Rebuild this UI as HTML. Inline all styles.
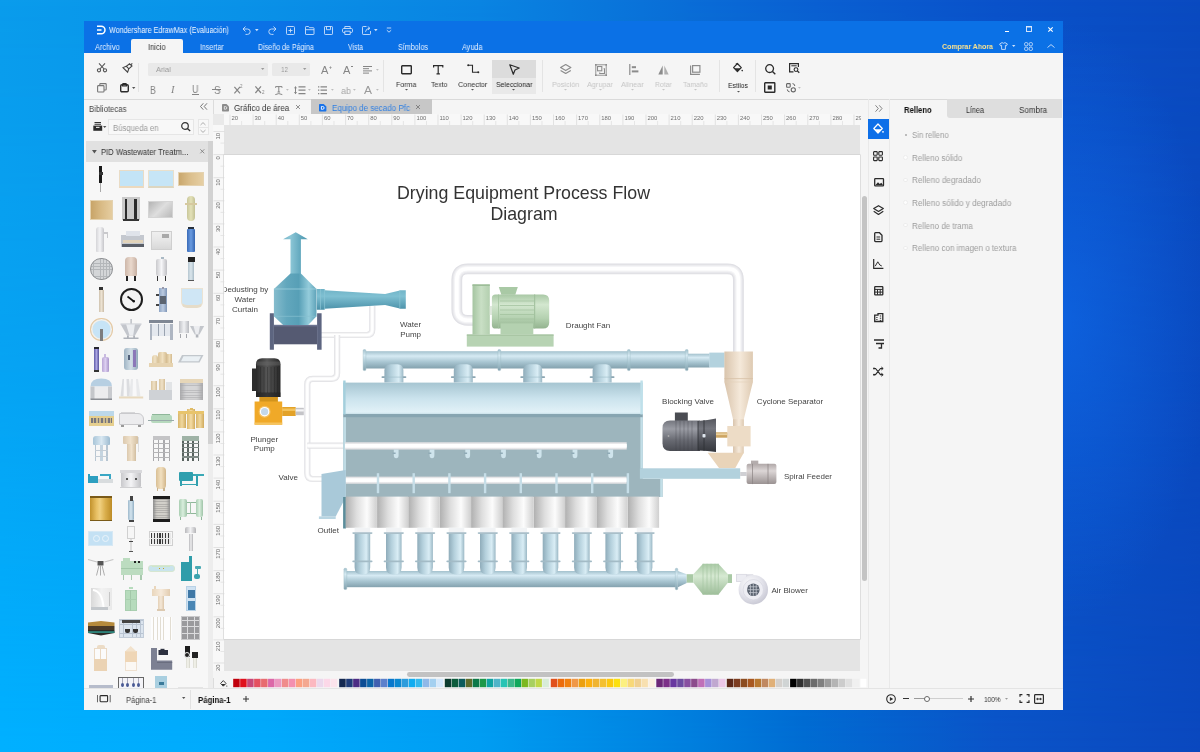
<!DOCTYPE html>
<html><head><meta charset="utf-8"><title>EdrawMax</title>
<style>
*{box-sizing:border-box;margin:0;padding:0}
html,body{width:1200px;height:752px;overflow:hidden}
body{font-family:"Liberation Sans",sans-serif;position:relative;
 background:linear-gradient(to right,#0a9cec 0,#0a92e8 20%,#0a84e2 40%,#0a70d8 55%,#0a60d2 68%,#0a52ca 83%,#0a4ac0 100%);}
#bg2{position:absolute;left:0;top:0;width:1200px;height:752px;
 background:linear-gradient(to right,#00b0ff 0,#00aafc 22%,#009df2 40%,#0086e2 54%,#006cd2 67%,#0a54c8 83%,#0a48be 100%);
 -webkit-mask-image:linear-gradient(to bottom,rgba(0,0,0,0) 0,rgba(0,0,0,.35) 45%,#000 100%);mask-image:linear-gradient(to bottom,rgba(0,0,0,0) 0,rgba(0,0,0,.35) 45%,#000 100%);}
#bg3{position:absolute;left:0;top:0;width:1200px;height:752px;
 background:radial-gradient(ellipse 150px 300px at 1063px 320px,rgba(16,108,236,.6),rgba(16,108,236,0) 100%);}
.a{position:absolute}
.t{position:absolute;white-space:nowrap;line-height:1;will-change:transform}
svg{position:absolute;overflow:visible}
</style></head><body>
<div id="bg2"></div><div id="bg3"></div>
<div class="a" style="left:84px;top:21px;width:979px;height:689px;background:#f5f5f5"></div>
<div class="a" style="left:84px;top:21px;width:979px;height:32px;background:#0b71e6"></div>
<!-- p_title -->
<svg style="left:95.5px;top:24.5px;" width="10" height="10" viewBox="0 0 10 10"><path d="M1 1.200H5.200A3.800 3.800 0 0 1 5.200 8.800H1" fill="none" stroke="#fff" stroke-width="1.500"/><path d="M1 5H5.500" stroke="#fff" stroke-width="1.500"/></svg>
<div class="t" style="left:109.00px;top:26.88px;font-size:8.2px;color:#f4f8ff;transform:scaleX(0.870);transform-origin:0 0;">Wondershare EdrawMax (Evaluación)</div>
<svg style="left:242px;top:25px;" width="10" height="10" viewBox="0 0 10 10"><path d="M3.5 1.5L1 4l2.5 2.5M1 4h4.5a2.7 2.7 0 0 1 0 5.4H3.5" fill="none" stroke="#cde1fb" stroke-width=".9"/></svg>
<svg style="left:254.5px;top:28.5px;" width="4" height="3" viewBox="0 0 4 3"><path d="M0 0h3.6L1.8 2.2z" fill="#cde1fb"/></svg>
<svg style="left:267px;top:25px;" width="10" height="10" viewBox="0 0 10 10"><path d="M6.5 1.5L9 4 6.5 6.5M9 4H4.5a2.7 2.7 0 0 0 0 5.4H6.5" fill="none" stroke="#cde1fb" stroke-width=".9"/></svg>
<svg style="left:286px;top:25.5px;" width="9" height="9" viewBox="0 0 9 9"><rect x=".5" y=".5" width="8" height="8" rx="1" fill="none" stroke="#cde1fb" stroke-width=".9"/><path d="M4.5 2.5v4M2.5 4.5h4" fill="none" stroke="#cde1fb" stroke-width=".9"/></svg>
<svg style="left:304.5px;top:25.5px;" width="10" height="9" viewBox="0 0 10 9"><path d="M.5 8V1.2q0-.7.7-.7h2.3l1 1.2h3.8q.7 0 .7.7V8q0 .5-.6.5H1.1Q.5 8.500 .5 8zM.5 3.7h8.500" fill="none" stroke="#cde1fb" stroke-width=".9"/></svg>
<svg style="left:324px;top:25.5px;" width="9" height="9" viewBox="0 0 9 9"><path d="M.5 1.2q0-.7.7-.7h6.600q.7 0 .7.7v6.600q0 .7-.7.7H1.200q-.7 0-.7-.7zM2.500 .5v3.200h4v-3.200" fill="none" stroke="#cde1fb" stroke-width=".9"/></svg>
<svg style="left:342px;top:25.5px;" width="11" height="9" viewBox="0 0 11 9"><path d="M2.800 2.500V.5h5.400v2M2.800 6.500H1.700Q.5 6.500 .5 5.300v-1.600Q.5 2.500 1.700 2.500h7.600q1.200 0 1.200 1.200v1.600q0 1.200-1.200 1.200H8.200M2.800 5.200h5.400v3.300H2.800z" fill="none" stroke="#cde1fb" stroke-width=".9"/></svg>
<svg style="left:362px;top:25.5px;" width="9" height="9" viewBox="0 0 9 9"><path d="M4.500 .5H1.200q-.7 0-.7.7v6.600q0 .7.7.7h6.600q.7 0 .7-.7V5M3.500 5.800q.3-3 4-3.600M5.800 .6l2 1.500-1.600 1.900" fill="none" stroke="#cde1fb" stroke-width=".9"/></svg>
<svg style="left:373.5px;top:28.5px;" width="4" height="3" viewBox="0 0 4 3"><path d="M0 0h3.600L1.800 2.200z" fill="#cde1fb"/></svg>
<svg style="left:386px;top:27px;" width="6" height="8" viewBox="0 0 6 8"><path d="M.8 1h4.400M.8 3.200L3 5.200 5.200 3.200" fill="none" stroke="#cde1fb" stroke-width=".9"/></svg>
<div class="a" style="left:131px;top:39px;width:51.5px;height:14px;background:#f5f5f5;border-radius:2px 2px 0 0"></div>
<div class="t" style="left:95.00px;top:43.88px;font-size:8.2px;color:#e6f0ff;transform:scaleX(0.903);transform-origin:0 0;">Archivo</div>
<div class="t" style="left:148.00px;top:43.88px;font-size:8.2px;color:#333;transform:scaleX(0.919);transform-origin:0 0;">Inicio</div>
<div class="t" style="left:200.00px;top:43.88px;font-size:8.2px;color:#e6f0ff;transform:scaleX(0.853);transform-origin:0 0;">Insertar</div>
<div class="t" style="left:258.00px;top:43.88px;font-size:8.2px;color:#e6f0ff;transform:scaleX(0.865);transform-origin:0 0;">Diseño de Página</div>
<div class="t" style="left:348.00px;top:43.88px;font-size:8.2px;color:#e6f0ff;transform:scaleX(0.830);transform-origin:0 0;">Vista</div>
<div class="t" style="left:397.50px;top:43.88px;font-size:8.2px;color:#e6f0ff;transform:scaleX(0.878);transform-origin:0 0;">Símbolos</div>
<div class="t" style="left:462.00px;top:43.88px;font-size:8.2px;color:#e6f0ff;transform:scaleX(0.887);transform-origin:0 0;">Ayuda</div>
<div class="t" style="left:941.50px;top:42.68px;font-size:7.8px;color:#fbe390;font-weight:bold;transform:scaleX(0.896);transform-origin:0 0;">Comprar Ahora</div>
<svg style="left:999px;top:42px;" width="9" height="8" viewBox="0 0 9 8"><path d="M3 .6L.6 2l1 1.800 1-.5V7.400h3.800V3.300l1 .5 1-1.800L6 .6Q4.500 2 3 .6z" fill="none" stroke="#cde1fb" stroke-width=".9"/></svg>
<svg style="left:1011.5px;top:45px;" width="4" height="3" viewBox="0 0 4 3"><path d="M0 0h3.400L1.700 2z" fill="#cde1fb"/></svg>
<svg style="left:1023.5px;top:41.5px;" width="9" height="9" viewBox="0 0 9 9"><rect x=".6" y=".6" width="3.200" height="3.200" rx="1.100" fill="none" stroke="#cde1fb" stroke-width=".9"/><rect x="5.200" y=".6" width="3.200" height="3.200" rx="1.100" fill="none" stroke="#cde1fb" stroke-width=".9"/><rect x=".6" y="5.200" width="3.200" height="3.200" rx="1.100" fill="none" stroke="#cde1fb" stroke-width=".9"/><rect x="5.200" y="5.200" width="3.200" height="3.200" rx="1.100" fill="none" stroke="#cde1fb" stroke-width=".9"/></svg>
<svg style="left:1046.5px;top:43.5px;" width="8" height="4" viewBox="0 0 8 4"><path d="M.5 3.500L4 .6 7.500 3.500" fill="none" stroke="#cde1fb" stroke-width=".9"/></svg>
<div class="a" style="left:1005px;top:31px;width:4px;height:1.2px;background:#fff;"></div>
<svg style="left:1026px;top:26px;" width="6" height="6" viewBox="0 0 6 6"><rect x=".5" y=".5" width="5" height="5" fill="none" stroke="#e6effd" stroke-width=".9"/><path d="M.5 1h5" stroke="#e6effd" stroke-width=".9"/></svg>
<svg style="left:1048px;top:26.5px;" width="5" height="5" viewBox="0 0 5 5"><path d="M.3 .3l4.400 4.400M4.700 .3L.3 4.700" stroke="#fff" stroke-width="1.100"/></svg>
<!-- p_ribbon -->
<div class="a" style="left:84px;top:98.5px;width:979px;height:1px;background:#dadada;"></div>
<svg style="left:97px;top:63px;" width="10" height="9.5" viewBox="0 0 10 9.5"><circle cx="2" cy="7.300" r="1.600" fill="none" stroke="#555" stroke-width="1.1"/><circle cx="8" cy="7.300" r="1.600" fill="none" stroke="#555" stroke-width="1.1"/><path d="M2.900 6L8 .4M7.100 6L2 .4" fill="none" stroke="#555" stroke-width="1.1"/></svg>
<svg style="left:121.5px;top:62.5px;" width="11" height="10" viewBox="0 0 11 10"><path d="M7.600 .8L10 3 6.800 5.800 4.300 3.200zM4.300 3.200L1 4.600 5.600 9.200 6.800 5.800M8.800 1.900l1.500-1.500" fill="none" stroke="#444" stroke-width="1.1"/></svg>
<svg style="left:97px;top:83.3px;" width="10" height="9.5" viewBox="0 0 10 9.5"><rect x=".6" y="2.600" width="6.400" height="6.400" rx=".8" fill="none" stroke="#777" stroke-width="1.1"/><path d="M2.800 2.600V1.300q0-.7.7-.7h5q.7 0 .7.7v5q0 .7-.7.7H7" fill="none" stroke="#777" stroke-width="1.1"/></svg>
<svg style="left:119.5px;top:83.3px;" width="9.5" height="9.5" viewBox="0 0 9.5 9.5"><rect x=".7" y="1.800" width="7.600" height="7" rx="1.200" fill="none" stroke="#2b2b2b" stroke-width="1.4"/><path d="M2.600 3V1.400Q2.600 .6 3.400 .6h2.200q.8 0 .8 .8V3z" fill="none" stroke="#2b2b2b" stroke-width="1.2"/></svg>
<svg style="left:131.60000000000002px;top:86.9px;" width="3.4" height="2" viewBox="0 0 3.4 2"><path d="M0 0h3.4L1.7 2z" fill="#555"/></svg>
<div class="a" style="left:137.5px;top:62.5px;width:1px;height:29px;background:#e4e4e4;"></div>
<div class="a" style="left:148px;top:62.7px;width:119.5px;height:13.5px;background:#e9e9e9;border-radius:1.500px"></div>
<div class="t" style="left:156.00px;top:66.08px;font-size:8px;color:#9a9a9a;transform:scaleX(0.918);transform-origin:0 0;">Arial</div>
<svg style="left:260.8px;top:68.4px;" width="3.4" height="2" viewBox="0 0 3.4 2"><path d="M0 0h3.4L1.7 2z" fill="#9a9a9a"/></svg>
<div class="a" style="left:272px;top:62.7px;width:37.5px;height:13.5px;background:#e9e9e9;border-radius:1.500px"></div>
<div class="t" style="left:280.50px;top:66.08px;font-size:8px;color:#9a9a9a;transform:scaleX(0.787);transform-origin:0 0;">12</div>
<svg style="left:303.0px;top:68.4px;" width="3.4" height="2" viewBox="0 0 3.4 2"><path d="M0 0h3.4L1.7 2z" fill="#9a9a9a"/></svg>
<div class="t" style="left:321.00px;top:65.45px;font-size:10.5px;color:#858585;transform:scaleX(1.057);transform-origin:0 0;">A</div>
<div class="t" style="left:328.60px;top:64.95px;font-size:5px;color:#858585;font-weight:bold;">+</div>
<div class="t" style="left:343.00px;top:65.45px;font-size:10.5px;color:#858585;transform:scaleX(1.057);transform-origin:0 0;">A</div>
<div class="a" style="left:350.6px;top:66.3px;width:2.6px;height:0.9px;background:#858585;"></div>
<svg style="left:363px;top:66px;" width="9.5" height="7.5" viewBox="0 0 9.5 7.5"><path d="M0 .5h9M0 2.700h6M0 4.900h9M0 7.100h6" fill="none" stroke="#858585" stroke-width="1"/></svg>
<svg style="left:375.6px;top:68.75px;" width="2.8" height="1.7" viewBox="0 0 2.8 1.7"><path d="M0 0h2.8L1.4 1.7z" fill="#bdbdbd"/></svg>
<div class="t" style="left:150.00px;top:85.05px;font-size:10.5px;color:#858585;transform:scaleX(0.857);transform-origin:0 0;">B</div>
<div class="t" style="left:171.00px;top:85.05px;font-size:10.5px;color:#858585;font-style:italic;font-family:'Liberation Serif',serif;">I</div>
<div class="t" style="left:192.30px;top:85.10px;font-size:10px;color:#858585;transform:scaleX(0.900);transform-origin:0 0;">U</div>
<div class="a" style="left:192px;top:94px;width:7.2px;height:0.9px;background:#858585;"></div>
<div class="t" style="left:213.50px;top:85.05px;font-size:10.5px;color:#858585;transform:scaleX(0.928);transform-origin:0 0;">S</div>
<div class="a" style="left:212.3px;top:89.3px;width:9px;height:0.9px;background:#858585;"></div>
<svg style="left:233.5px;top:86px;" width="11" height="8" viewBox="0 0 11 8"><path d="M.4 .8L6 7.400M6 .8L.4 7.400" fill="none" stroke="#858585" stroke-width="1.2"/></svg>
<div class="t" style="left:240.30px;top:84.89px;font-size:4.5px;color:#858585;">2</div>
<svg style="left:254.7px;top:86px;" width="11" height="8" viewBox="0 0 11 8"><path d="M.4 .4L6 7M6 .4L.4 7" fill="none" stroke="#858585" stroke-width="1.2"/></svg>
<div class="t" style="left:261.50px;top:90.69px;font-size:4.5px;color:#858585;">2</div>
<svg style="left:274.5px;top:85.5px;" width="8" height="9" viewBox="0 0 8 9"><path d="M.6 1.800V.6h6.400v1.200M3.800 .6v5.400M2.500 6h2.600" fill="none" stroke="#858585" stroke-width="1"/><path d="M.3 8.600Q3.800 6.600 7.300 8.600" fill="none" stroke="#858585" stroke-width="1"/></svg>
<svg style="left:285.6px;top:88.95px;" width="2.8" height="1.7" viewBox="0 0 2.8 1.7"><path d="M0 0h2.8L1.4 1.7z" fill="#bdbdbd"/></svg>
<svg style="left:294px;top:85.8px;" width="11.5" height="8.5" viewBox="0 0 11.5 8.5"><path d="M4.500 .8h7M4.500 4.200h7M4.500 7.600h7" fill="none" stroke="#858585" stroke-width="1.2"/><path d="M1.500 .7v7" fill="none" stroke="#858585" stroke-width="1"/><path d="M0 2.300L1.500 .2 3 2.300zM0 6.100L1.500 8.200 3 6.100z" fill="#858585"/></svg>
<svg style="left:307.90000000000003px;top:88.95px;" width="2.8" height="1.7" viewBox="0 0 2.8 1.7"><path d="M0 0h2.8L1.4 1.7z" fill="#bdbdbd"/></svg>
<svg style="left:318.3px;top:85.8px;" width="9.5" height="8.5" viewBox="0 0 9.5 8.5"><path d="M2.500 .8h6.500M2.500 4.200h6.500M2.500 7.600h6.500" fill="none" stroke="#858585" stroke-width="1.2"/><path d="M0 .8h1.300M0 4.200h1.300M0 7.600h1.300" fill="none" stroke="#858585" stroke-width="1.2"/></svg>
<svg style="left:330.6px;top:88.95px;" width="2.8" height="1.7" viewBox="0 0 2.8 1.7"><path d="M0 0h2.8L1.4 1.7z" fill="#bdbdbd"/></svg>
<div class="t" style="left:340.50px;top:86.34px;font-size:9.5px;color:#a8a8a8;transform:scaleX(0.946);transform-origin:0 0;">ab</div>
<svg style="left:353.1px;top:88.95px;" width="2.8" height="1.7" viewBox="0 0 2.8 1.7"><path d="M0 0h2.8L1.4 1.7z" fill="#bdbdbd"/></svg>
<div class="t" style="left:364.00px;top:84.61px;font-size:11px;color:#9a9a9a;transform:scaleX(1.090);transform-origin:0 0;">A</div>
<svg style="left:375.90000000000003px;top:88.95px;" width="2.8" height="1.7" viewBox="0 0 2.8 1.7"><path d="M0 0h2.8L1.4 1.7z" fill="#bdbdbd"/></svg>
<div class="a" style="left:383px;top:60px;width:1px;height:32px;background:#e4e4e4;"></div>
<svg style="left:400.7px;top:64.7px;" width="11" height="9.5" viewBox="0 0 11 9.5"><rect x=".7" y=".7" width="9.600" height="8" rx=".6" fill="none" stroke="#2b2b2b" stroke-width="1.4"/></svg>
<div class="t" style="left:396.05px;top:80.98px;font-size:8px;color:#333;transform:scaleX(0.878);transform-origin:0 0;">Forma</div>
<svg style="left:404.7px;top:88.5px;" width="3" height="1.6" viewBox="0 0 3 1.6"><path d="M0 0h3L1.5 1.6z" fill="#555"/></svg>
<svg style="left:433.3px;top:65px;" width="10.5" height="9.5" viewBox="0 0 10.5 9.5"><path d="M.6 2.400V.6h9.200v1.800M5.200 .6v8.200M3.500 8.800h3.400" fill="none" stroke="#2b2b2b" stroke-width="1.2"/></svg>
<div class="t" style="left:430.65px;top:80.98px;font-size:8px;color:#333;transform:scaleX(0.852);transform-origin:0 0;">Texto</div>
<svg style="left:466.5px;top:64px;" width="13" height="10" viewBox="0 0 13 10"><path d="M1.200 1.200H5.500V8.200H11" fill="none" stroke="#2b2b2b" stroke-width="1.1"/><circle cx="1.200" cy="1.200" r="1" fill="#2b2b2b"/><circle cx="11.300" cy="8.200" r="1" fill="#2b2b2b"/></svg>
<div class="t" style="left:458.05px;top:80.98px;font-size:8px;color:#333;transform:scaleX(0.903);transform-origin:0 0;">Conector</div>
<svg style="left:471.2px;top:88.5px;" width="3" height="1.6" viewBox="0 0 3 1.6"><path d="M0 0h3L1.5 1.6z" fill="#555"/></svg>
<div class="a" style="left:491.7px;top:60.3px;width:44.5px;height:33.4px;background:#e9e9e9;"></div>
<div class="a" style="left:491.7px;top:60.3px;width:44.5px;height:17.4px;background:#dcdcdc;"></div>
<svg style="left:508.7px;top:64.3px;" width="11" height="11" viewBox="0 0 11 11"><path d="M.8 .8L10.200 4 6 6 4.300 10.300z" fill="none" stroke="#2b2b2b" stroke-width="1.2" stroke-linejoin="round"/></svg>
<div class="t" style="left:495.75px;top:80.98px;font-size:8px;color:#222;transform:scaleX(0.868);transform-origin:0 0;">Seleccionar</div>
<svg style="left:512.4px;top:88.5px;" width="3" height="1.6" viewBox="0 0 3 1.6"><path d="M0 0h3L1.5 1.6z" fill="#555"/></svg>
<div class="a" style="left:542px;top:60px;width:1px;height:32px;background:#e4e4e4;"></div>
<svg style="left:560px;top:64.3px;" width="11.5" height="11" viewBox="0 0 11.5 11"><path d="M5.700 .6L10.800 3.600 5.700 6.600 .6 3.600z" fill="none" stroke="#8c8c8c" stroke-width="1.2" stroke-linejoin="round"/><path d="M.6 6.400L5.700 9.500 10.800 6.400" fill="none" stroke="#8c8c8c" stroke-width="1.2" stroke-linejoin="round"/></svg>
<div class="t" style="left:552.05px;top:80.98px;font-size:8px;color:#c6c6c6;transform:scaleX(0.903);transform-origin:0 0;">Posición</div>
<svg style="left:564.2px;top:88.5px;" width="3" height="1.6" viewBox="0 0 3 1.6"><path d="M0 0h3L1.5 1.6z" fill="#c6c6c6"/></svg>
<svg style="left:594.7px;top:64px;" width="12" height="12" viewBox="0 0 12 12"><rect x=".8" y=".8" width="10.400" height="10.400" fill="none" stroke="#8c8c8c" stroke-width="0.9"/><rect x="2.500" y="2.500" width="4.300" height="4.300" fill="none" stroke="#8c8c8c" stroke-width="1.1"/><path d="M8.600 4.700h.9v4.800H4.700v-.9" fill="none" stroke="#8c8c8c" stroke-width="1.1"/><rect x="0" y="0" width="1.600" height="1.600" fill="#8c8c8c"/><rect x="10.400" y="0" width="1.600" height="1.600" fill="#8c8c8c"/><rect x="0" y="10.400" width="1.600" height="1.600" fill="#8c8c8c"/><rect x="10.400" y="10.400" width="1.600" height="1.600" fill="#8c8c8c"/></svg>
<div class="t" style="left:587.30px;top:80.98px;font-size:8px;color:#c6c6c6;transform:scaleX(0.913);transform-origin:0 0;">Agrupar</div>
<svg style="left:598.8px;top:88.5px;" width="3" height="1.6" viewBox="0 0 3 1.6"><path d="M0 0h3L1.5 1.6z" fill="#c6c6c6"/></svg>
<svg style="left:628.5px;top:64.3px;" width="10" height="11" viewBox="0 0 10 11"><path d="M.8 0v11" fill="none" stroke="#8c8c8c" stroke-width="1.2"/><rect x="2.800" y="2.200" width="4.200" height="2" fill="#8c8c8c"/><rect x="2.800" y="6.400" width="6.600" height="2" fill="#8c8c8c"/></svg>
<div class="t" style="left:621.35px;top:80.98px;font-size:8px;color:#c6c6c6;transform:scaleX(0.912);transform-origin:0 0;">Alinear</div>
<svg style="left:631.2px;top:88.5px;" width="3" height="1.6" viewBox="0 0 3 1.6"><path d="M0 0h3L1.5 1.6z" fill="#c6c6c6"/></svg>
<svg style="left:658.4px;top:65px;" width="11" height="10" viewBox="0 0 11 10"><path d="M4.700 .5V9.500H.3z" fill="#8c8c8c"/><path d="M6.300 .5V9.500H10.700z" fill="#b0b0b0"/></svg>
<div class="t" style="left:655.35px;top:80.98px;font-size:8px;color:#c6c6c6;transform:scaleX(0.854);transform-origin:0 0;">Rotar</div>
<svg style="left:662.2px;top:88.5px;" width="3" height="1.6" viewBox="0 0 3 1.6"><path d="M0 0h3L1.5 1.6z" fill="#c6c6c6"/></svg>
<svg style="left:690.4px;top:64.7px;" width="10.5" height="10" viewBox="0 0 10.5 10"><rect x="2.600" y=".6" width="7.300" height="6.600" fill="none" stroke="#8c8c8c" stroke-width="1.2"/><path d="M.6 .6V9.400H9.900" fill="none" stroke="#8c8c8c" stroke-width="1.2"/></svg>
<div class="t" style="left:683.25px;top:80.98px;font-size:8px;color:#c6c6c6;transform:scaleX(0.868);transform-origin:0 0;">Tamaño</div>
<svg style="left:694.1px;top:88.5px;" width="3" height="1.6" viewBox="0 0 3 1.6"><path d="M0 0h3L1.5 1.6z" fill="#c6c6c6"/></svg>
<div class="a" style="left:718.5px;top:60px;width:1px;height:32px;background:#e4e4e4;"></div>
<svg style="left:733.3px;top:62.6px;" width="10" height="9.5" viewBox="0 0 10 9.5"><path d="M4.400 .5L8.300 4.600 4.400 8.600 .6 4.600z" fill="none" stroke="#2b2b2b" stroke-width="1.2" stroke-linejoin="round"/><path d="M1.200 5.200h6.600L4.400 8.500z" fill="#2b2b2b"/><path d="M3 .2l1.600 1.600" fill="none" stroke="#2b2b2b" stroke-width="1"/><circle cx="9.200" cy="7.600" r=".8" fill="#2b2b2b"/></svg>
<div class="t" style="left:728.00px;top:82.08px;font-size:8px;color:#222;transform:scaleX(0.849);transform-origin:0 0;">Estilos</div>
<svg style="left:736.8px;top:90.9px;" width="3" height="1.6" viewBox="0 0 3 1.6"><path d="M0 0h3L1.5 1.6z" fill="#555"/></svg>
<div class="a" style="left:755px;top:60px;width:1px;height:32px;background:#e4e4e4;"></div>
<svg style="left:765px;top:63.5px;" width="11" height="10.5" viewBox="0 0 11 10.5"><circle cx="4.600" cy="4.600" r="3.900" fill="none" stroke="#2b2b2b" stroke-width="1.3"/><path d="M7.500 7.500L10.300 10.200" fill="none" stroke="#2b2b2b" stroke-width="1.4"/></svg>
<svg style="left:788.7px;top:63px;" width="11" height="10" viewBox="0 0 11 10"><path d="M9.400 4V.6H.6V8.800H4.500" fill="none" stroke="#2b2b2b" stroke-width="1.2"/><path d="M2.300 2.800h5.400" fill="none" stroke="#2b2b2b" stroke-width="1"/><circle cx="7" cy="6.600" r="1.900" fill="none" stroke="#2b2b2b" stroke-width="1.1"/><path d="M8.400 8l1.900 1.700" fill="none" stroke="#2b2b2b" stroke-width="1.2"/></svg>
<svg style="left:764.3px;top:82px;" width="11.5" height="11" viewBox="0 0 11.5 11"><rect x=".7" y=".7" width="10.100" height="9.600" rx=".6" fill="none" stroke="#2b2b2b" stroke-width="1.4"/><rect x="3.700" y="3.500" width="4.100" height="4" fill="#2b2b2b"/></svg>
<svg style="left:786px;top:83px;" width="10.5" height="9.5" viewBox="0 0 10.5 9.5"><rect x=".6" y=".6" width="3.600" height="3.600" rx=".6" fill="none" stroke="#666" stroke-width="1.1"/><circle cx="7.300" cy="6.800" r="2.100" fill="none" stroke="#666" stroke-width="1.1"/><path d="M6.500 .6Q8.800 .8 8.800 3M3.600 8.800Q1.300 8.600 1.300 6.400" fill="none" stroke="#666" stroke-width="1"/></svg>
<svg style="left:798.2px;top:86.75px;" width="2.8" height="1.7" viewBox="0 0 2.8 1.7"><path d="M0 0h2.8L1.4 1.7z" fill="#bdbdbd"/></svg>
<!-- p_left -->
<div class="a" style="left:212.8px;top:99px;width:1px;height:589px;background:#dcdcdc;"></div>
<div class="t" style="left:88.70px;top:104.63px;font-size:8.3px;color:#444;transform:scaleX(0.934);transform-origin:0 0;">Bibliotecas</div>
<svg style="left:199.5px;top:103.4px;" width="7.5" height="7" viewBox="0 0 7.5 7"><path d="M3.300 .3L.5 3.500 3.300 6.700M7 .3L4.200 3.500 7 6.700" fill="none" stroke="#666" stroke-width=".9"/></svg>
<svg style="left:93px;top:122px;" width="9.5" height="9" viewBox="0 0 9.5 9"><path d="M1.500 0h6.500v1H1.500zM1.500 1.800h6.500v1H1.500z" fill="#333"/><path d="M.3 3.600h8.900V8.800H.3z" fill="#2b2b2b"/><path d="M3 4.800h3.500v1.100H3z" fill="#f5f5f5"/></svg>
<svg style="left:102.8px;top:126px;" width="3.4" height="2" viewBox="0 0 3.4 2"><path d="M0 0h3.400L1.700 2z" fill="#555"/></svg>
<div class="a" style="left:108.3px;top:118.6px;width:85.4px;height:16.4px;background:#f8f8f8;border:1px solid #e6e6e6"></div>
<div class="t" style="left:113.20px;top:123.73px;font-size:8.3px;color:#9a9a9a;transform:scaleX(0.930);transform-origin:0 0;">Búsqueda en</div>
<svg style="left:181px;top:122px;" width="10" height="9.5" viewBox="0 0 10 9.5"><circle cx="4" cy="4" r="3.300" fill="none" stroke="#333" stroke-width="1.200"/><path d="M6.400 6.400L9.200 9" stroke="#333" stroke-width="1.300"/></svg>
<div class="a" style="left:198.1px;top:118.6px;width:10.5px;height:16.4px;background:#f8f8f8;border:1px solid #e6e6e6"></div>
<svg style="left:200.3px;top:121.5px;" width="6" height="11" viewBox="0 0 6 11"><path d="M.5 3L3 .6 5.500 3M.5 8L3 10.400 5.500 8" fill="none" stroke="#999" stroke-width=".8"/></svg>
<div class="a" style="left:198.1px;top:126.5px;width:10.5px;height:1px;background:#e6e6e6;"></div>
<div class="a" style="left:86.3px;top:140.8px;width:121.6px;height:21px;background:#e1e1e1;"></div>
<svg style="left:92.4px;top:149.5px;" width="5" height="3.6" viewBox="0 0 5 3.6"><path d="M0 0h4.800L2.400 3.400z" fill="#555"/></svg>
<div class="t" style="left:100.90px;top:148.03px;font-size:8.3px;color:#333;transform:scaleX(0.924);transform-origin:0 0;">PID Wastewater Treatm...</div>
<svg style="left:199.5px;top:149.3px;" width="4.6" height="4.6" viewBox="0 0 4.6 4.6"><path d="M.3 .3l4 4M4.300 .3l-4 4" stroke="#777" stroke-width=".8"/></svg>
<div class="a" style="left:86.3px;top:161.8px;width:121.6px;height:526.5px;background:#f7f7f7;"></div>
<div class="a" style="left:207.9px;top:140.8px;width:4.9px;height:547.5px;background:#ededed;"></div>
<div class="a" style="left:207.9px;top:140.8px;width:4.9px;height:303px;background:#d2d2d2;"></div>
<div class="a" style="left:99.4px;top:166px;width:2.8px;height:17px;background:#1a1a1a;"></div>
<div class="a" style="left:100.3px;top:183px;width:1.0px;height:9px;background:#aaa;"></div>
<div class="a" style="left:98.8px;top:172px;width:4.0px;height:3px;background:#333;"></div>
<div class="a" style="left:118.6px;top:170.4px;width:25.0px;height:18.1px;background:#c3e4f6;border:1px solid #e9dcc6;border-bottom:2px solid #ecd9bd"></div>
<div class="a" style="left:148.3px;top:170.4px;width:25.6px;height:18.1px;background:#c6e5f6;border:1px solid #e9e0cc;border-bottom:2px solid #ddd6c0"></div>
<div class="a" style="left:178.2px;top:172.4px;width:25.4px;height:13.9px;background:linear-gradient(to right,#c9a76d,#dcc08e,#e6cfa4);border:1px solid #e4d2b0"></div>
<div class="a" style="left:90px;top:200px;width:22.5px;height:19.6px;background:linear-gradient(to right,#c8a468,#d9bb86,#e5cda0);border:1px solid #e4d2b0"></div>
<div class="a" style="left:122.4px;top:196.6px;width:17.3px;height:23.9px;background:#c9c9c9;"></div>
<div class="a" style="left:124.8px;top:198.5px;width:2.5px;height:21.0px;background:#2a2a2a;"></div>
<div class="a" style="left:134.3px;top:198.5px;width:2.5px;height:21.0px;background:#2a2a2a;"></div>
<div class="a" style="left:123.4px;top:218.5px;width:15.2px;height:2.0px;background:#333;"></div>
<div class="a" style="left:148.3px;top:201px;width:25.2px;height:17.4px;background:linear-gradient(135deg,#b4b4b4,#dedede,#b9b9b9);border:1px solid #d4d4d4"></div>
<div class="a" style="left:187px;top:196.3px;width:8px;height:25.1px;background:linear-gradient(to right,#c9c79a,#e3e1b8,#c2c093);border-radius:4px"></div>
<div class="a" style="left:185px;top:203px;width:12px;height:1.5px;background:#d6c9a0;"></div>
<div class="a" style="left:95.5px;top:227px;width:8.0px;height:24.6px;background:linear-gradient(to right,#d5d5d8,#f4f4f6,#c6c6ca);border-radius:3px 3px 1px 1px"></div>
<div class="a" style="left:103.5px;top:232px;width:4.5px;height:1.5px;background:#c9c9cc;"></div>
<div class="a" style="left:106.8px;top:232px;width:1.4px;height:6px;background:#c9c9cc;"></div>
<div class="a" style="left:121.2px;top:235px;width:23.0px;height:12.3px;background:#c4c8cf;"></div>
<div class="a" style="left:126px;top:231px;width:14px;height:5px;background:#dfe3ea;"></div>
<div class="a" style="left:123px;top:240px;width:20px;height:3px;background:#e2d4bb;"></div>
<div class="a" style="left:122px;top:244px;width:22px;height:2.5px;background:#5a5f68;"></div>
<div class="a" style="left:150.6px;top:231px;width:21.2px;height:18.9px;background:linear-gradient(to bottom,#efefef,#e6e6e6,#d8d8d8);border:1px solid #cfcfcf"></div>
<div class="a" style="left:162px;top:234px;width:6.5px;height:3.5px;background:#a9a9a9;"></div>
<div class="a" style="left:187.4px;top:229px;width:7.2px;height:22.6px;background:linear-gradient(to right,#3a6bb8,#6a9be0,#3565b0);border-radius:1px"></div>
<div class="a" style="left:187.8px;top:226.6px;width:6.4px;height:2.9px;background:#27303c;"></div>
<div class="a" style="left:90px;top:257.7px;width:22.5px;height:22.5px;background:#d4d6d8;border-radius:50%;border:1.500px solid #8f9194;background-image:repeating-linear-gradient(0deg,transparent 0 2.500px,#b4b7ba 2.500px 3.200px),repeating-linear-gradient(90deg,transparent 0 2.500px,#b4b7ba 2.500px 3.200px)"></div>
<div class="a" style="left:125.1px;top:256.5px;width:11.6px;height:19.5px;background:linear-gradient(to right,#cdb7a9,#ead9cd,#c7b0a2);border-radius:4px 4px 1px 1px"></div>
<div class="a" style="left:126px;top:276px;width:1.5px;height:5px;background:#222;"></div>
<div class="a" style="left:134.3px;top:276px;width:1.5px;height:5px;background:#222;"></div>
<div class="a" style="left:156.2px;top:258.5px;width:11.1px;height:17.5px;background:linear-gradient(to right,#c9c9cc,#f6f6f8,#bfbfc3);border-radius:2px"></div>
<div class="a" style="left:157px;top:276px;width:1.4px;height:5px;background:#333;"></div>
<div class="a" style="left:165px;top:276px;width:1.4px;height:5px;background:#333;"></div>
<div class="a" style="left:160.5px;top:256.5px;width:3.0px;height:2.5px;background:#aab9c4;"></div>
<div class="a" style="left:188.2px;top:261px;width:6.0px;height:20px;background:linear-gradient(to right,#b5c6d0,#dbe6ec,#a9bbc6);"></div>
<div class="a" style="left:187.7px;top:256.5px;width:6.9px;height:5.0px;background:#222;"></div>
<div class="a" style="left:188px;top:279.5px;width:6.4px;height:1.5px;background:#555;"></div>
<div class="a" style="left:98.7px;top:290px;width:5.2px;height:22px;background:linear-gradient(to right,#cfc2ae,#ece2d2,#c9bba6);"></div>
<div class="a" style="left:99.2px;top:286.6px;width:4.2px;height:3.9px;background:#333;"></div>
<div class="a" style="left:120px;top:287.8px;width:22.8px;height:23px;background:#f3f3f3;border-radius:50%;border:2px solid #1d1d1d"></div>
<svg style="left:120px;top:287.8px;" width="23" height="23" viewBox="0 0 23 23"><path d="M7.500 8.500L14 13.500" stroke="#111" stroke-width="1.600"/><circle cx="13.800" cy="13.300" r="1.200" fill="#111"/></svg>
<div class="a" style="left:159px;top:288px;width:8px;height:24px;background:linear-gradient(to right,#8da4c4,#bccbe0,#7f95b6);"></div>
<div class="a" style="left:155.7px;top:294px;width:3.8px;height:2px;background:#444;"></div>
<div class="a" style="left:155.7px;top:304px;width:3.8px;height:2px;background:#444;"></div>
<div class="a" style="left:160px;top:296px;width:6px;height:8px;background:#5c6470;"></div>
<div class="a" style="left:161.5px;top:286.6px;width:2.5px;height:2.4px;background:#99a;"></div>
<div class="a" style="left:180.5px;top:288.3px;width:22.8px;height:20.2px;background:#cfe6f5;border:1.500px solid #ebe3d3;border-bottom:3px solid #e6dcc8;border-radius:0 0 6px 6px"></div>
<div class="a" style="left:90px;top:318.4px;width:22.5px;height:22.3px;background:#c7e4f6;border-radius:50%;border:1.500px solid #e8c9a0;box-shadow:inset 0 0 0 1.500px #f4f0ea"></div>
<div class="a" style="left:100px;top:329px;width:2.8px;height:11.5px;background:#7d7d7d;"></div>
<svg style="left:120.3px;top:318.9px;" width="22" height="21.5" viewBox="0 0 22 21.5"><path d="M.5 5h21L15 16.500H7z" fill="#c3c6cc"/><path d="M6 5h9L13.200 16.500H9.500z" fill="#eceef1"/><path d="M.5 4.200h21v1.400H.5z" fill="#d9dbdf"/><path d="M10.500 0h1.200v4.500h-1.200zM3.500 18.500h15v1.600h-15zM7 16.500h1.800v2.500H7zM13.200 16.500H15V19h-1.800z" fill="#aeb2b9"/></svg>
<div class="a" style="left:148.8px;top:319.8px;width:24.7px;height:3.7px;background:#7f8794;"></div>
<div class="a" style="left:149.5px;top:323.5px;width:2.5px;height:16.1px;background:#aeb6c2;"></div>
<div class="a" style="left:170.3px;top:323.5px;width:2.5px;height:16.1px;background:#aeb6c2;"></div>
<div class="a" style="left:152px;top:324px;width:18.3px;height:12px;background:#e4e8ee;"></div>
<div class="a" style="left:157.5px;top:324px;width:1.0px;height:12px;background:#9aa3b0;"></div>
<div class="a" style="left:164px;top:324px;width:1px;height:12px;background:#9aa3b0;"></div>
<div class="a" style="left:179px;top:320.6px;width:9.5px;height:12.9px;background:linear-gradient(to right,#bfc1c6,#f0f1f3,#b9bbc0);"></div>
<div class="a" style="left:180px;top:333.5px;width:1.2px;height:4.4px;background:#a4a6ab;"></div>
<div class="a" style="left:186px;top:333.5px;width:1.2px;height:4.4px;background:#a4a6ab;"></div>
<svg style="left:189.5px;top:326px;" width="14.2" height="12" viewBox="0 0 14.2 12"><path d="M0 0h14.200L9.500 8.500H4.700z" fill="#c3c6cb"/><path d="M3.500 0h6.500L8.300 8.500H5.800z" fill="#ecedf0"/><path d="M5.800 8.500h2.600v3H5.800z" fill="#b1b4ba"/></svg>
<div class="a" style="left:94px;top:349px;width:4.8px;height:22.6px;background:linear-gradient(to right,#5d5aa8,#a9a4e0,#54519c);"></div>
<div class="a" style="left:93.5px;top:346.6px;width:5.8px;height:2.9px;background:#26262e;"></div>
<div class="a" style="left:93.5px;top:369.5px;width:5.8px;height:2.1px;background:#333;"></div>
<div class="a" style="left:101.5px;top:357px;width:7.5px;height:14.6px;background:linear-gradient(to right,#b9a6d6,#dccff0,#a995ca);border-radius:2px 2px 1px 1px"></div>
<div class="a" style="left:103.5px;top:354px;width:2.5px;height:3.5px;background:#c9bbe0;"></div>
<div class="a" style="left:124.1px;top:347.5px;width:13.5px;height:22.4px;background:linear-gradient(to right,#9fb4c4,#d4e0e8,#93a9ba);border-radius:3px"></div>
<div class="a" style="left:132.5px;top:350px;width:3.5px;height:17px;background:#8c78b8;"></div>
<div class="a" style="left:128px;top:355px;width:2px;height:5px;background:#50607a;"></div>
<div class="a" style="left:148.8px;top:362.5px;width:24.2px;height:4.8px;background:#e6d3b0;"></div>
<div class="a" style="left:158px;top:352px;width:8.5px;height:10.5px;background:linear-gradient(to right,#d9c298,#f0e0c0,#d3ba8e);border-radius:2px 2px 0 0"></div>
<div class="a" style="left:167px;top:354px;width:5px;height:8.5px;background:linear-gradient(to right,#d9c298,#eedcb8,#d3ba8e);"></div>
<div class="a" style="left:152px;top:355px;width:6px;height:7.5px;background:linear-gradient(to right,#e0cba2,#f0e2c6,#d8c298);border-radius:3px 3px 0 0"></div>
<svg style="left:178.2px;top:355.2px;" width="25.5" height="7.5" viewBox="0 0 25.5 7.5"><path d="M4 0h21.500L21.500 7.500H0z" fill="#c2c7cc"/><path d="M5.500 1.300h17.500L20.500 6.200H3z" fill="#eaf0f4"/></svg>
<svg style="left:90px;top:377.7px;" width="22.5" height="22.2" viewBox="0 0 22.5 22.2"><path d="M.5 8.500Q.5 .5 11.250 .5T22 8.500z" fill="#b7cfe2"/><path d="M.5 8.500h21.500V21H.5z" fill="#ececee"/><path d="M.5 8.500h4V21h-4z" fill="#c4c6ca"/><path d="M18 8.500h4V21h-4z" fill="#c9cbcf"/><path d="M.5 20.500h21.500V22H.5z" fill="#8b8e94"/></svg>
<svg style="left:119.4px;top:379.4px;" width="24.2" height="19.5" viewBox="0 0 24.2 19.5"><path d="M3.500 0h6.500l1.500 17.500H1.500z" fill="#dcdde0"/><path d="M12 0h7l2.500 17.500H10z" fill="#e8e9eb"/><path d="M5 0h2.500l.5 17.500H4.500zM14 0h3l.8 17.500H13.500z" fill="#f8f8f9"/><path d="M0 17.500h24.200v2H0z" fill="#e8d9be"/></svg>
<div class="a" style="left:149.3px;top:390px;width:22.9px;height:9.6px;background:#cfd2d6;"></div>
<div class="a" style="left:151px;top:380.5px;width:6px;height:9.5px;background:linear-gradient(to right,#d9c5a0,#f0e2c8,#d2bc96);"></div>
<div class="a" style="left:158.5px;top:378.5px;width:6.5px;height:11.5px;background:linear-gradient(to right,#d9c5a0,#f0e2c8,#d2bc96);"></div>
<div class="a" style="left:166px;top:382px;width:5.5px;height:8px;background:#e2e4e6;"></div>
<div class="a" style="left:180px;top:382.5px;width:23px;height:17.1px;background:#cfcfd0;background-image:repeating-linear-gradient(0deg,#d6d6d7 0 1.500px,#bebec0 1.500px 2.500px);box-shadow:inset 5px 0 4px -2px #a9a9ab,inset -5px 0 4px -2px #a9a9ab"></div>
<div class="a" style="left:180px;top:379.4px;width:23px;height:3.4px;background:#e6d6b8;"></div>
<div class="a" style="left:88.8px;top:410.7px;width:24.9px;height:5.3px;background:#bcd8ea;"></div>
<div class="a" style="left:88.8px;top:416px;width:24.9px;height:10px;background:#e6cf8e;"></div>
<div class="a" style="left:91px;top:418px;width:20.5px;height:5px;background:#8c8a90;background-image:repeating-linear-gradient(90deg,#77757c 0 1.500px,#c9b98e 1.500px 3.400px)"></div>
<div class="a" style="left:119.4px;top:413px;width:24.2px;height:12px;background:#ececee;border:1px solid #c9c9cc;border-radius:1px 6px 1px 1px"></div>
<div class="a" style="left:121px;top:411.8px;width:14px;height:1.7px;background:#d6d6d8;"></div>
<div class="a" style="left:121px;top:425px;width:3px;height:1.8px;background:#999;"></div>
<div class="a" style="left:138px;top:425px;width:3px;height:1.8px;background:#999;"></div>
<div class="a" style="left:150.5px;top:414.5px;width:21.0px;height:8.5px;background:#b6d9bd;border-radius:2px"></div>
<div class="a" style="left:148.3px;top:419.5px;width:25.6px;height:1.5px;background:#9aa;"></div>
<div class="a" style="left:152px;top:413.5px;width:18px;height:1.5px;background:#8fb79a;"></div>
<div class="a" style="left:178.2px;top:412px;width:7.8px;height:15.5px;background:linear-gradient(to right,#d8b56a,#f0d8a0,#d0aa5c);"></div>
<div class="a" style="left:186.8px;top:409px;width:8.2px;height:20.4px;background:linear-gradient(to right,#dcb96e,#f4dca6,#d2ac5e);"></div>
<div class="a" style="left:195.8px;top:412px;width:7.8px;height:15.5px;background:linear-gradient(to right,#d8b56a,#f0d8a0,#d0aa5c);"></div>
<div class="a" style="left:178.2px;top:410.5px;width:25.4px;height:3.0px;background:#e8c46c;"></div>
<div class="a" style="left:189.5px;top:407.8px;width:3.0px;height:2.2px;background:#e0bc66;"></div>
<div class="a" style="left:92.6px;top:436px;width:17.0px;height:8.5px;background:linear-gradient(to right,#a8c5d8,#d9e8f2,#9dbbd0);border-radius:3px 3px 1px 1px"></div>
<div class="a" style="left:94.5px;top:444.5px;width:1.5px;height:16.9px;background:#b8c6d2;"></div>
<div class="a" style="left:106.3px;top:444.5px;width:1.5px;height:16.9px;background:#b8c6d2;"></div>
<div class="a" style="left:99.5px;top:444.5px;width:3.5px;height:16.9px;background:#c4d4e0;"></div>
<div class="a" style="left:94.5px;top:450px;width:13.3px;height:1px;background:#c3cdd6;"></div>
<div class="a" style="left:94.5px;top:456px;width:13.3px;height:1px;background:#c3cdd6;"></div>
<div class="a" style="left:123.4px;top:436px;width:15.1px;height:8px;background:linear-gradient(to right,#dcc9ae,#f0e2cc,#d4c0a2);border-radius:1px"></div>
<div class="a" style="left:126.5px;top:444px;width:9.0px;height:17.4px;background:linear-gradient(to right,#dcc9ae,#f0e2cc,#d2bea0);"></div>
<div class="a" style="left:137.5px;top:437px;width:1.2px;height:15px;background:#ddd;"></div>
<div class="a" style="left:152.8px;top:436px;width:16.8px;height:25.4px;background:transparent;background-image:repeating-linear-gradient(0deg,transparent 0 3.400px,#b4b4b6 3.400px 4.400px),repeating-linear-gradient(90deg,#a9a9ac 0 1.200px,transparent 1.200px 5.200px)"></div>
<div class="a" style="left:152.8px;top:436px;width:16.8px;height:4px;background:#c4c4c6;"></div>
<div class="a" style="left:182.2px;top:436px;width:17.3px;height:25.4px;background:transparent;background-image:repeating-linear-gradient(0deg,transparent 0 3.400px,#7f8a86 3.400px 4.600px),repeating-linear-gradient(90deg,#59625f 0 1.500px,transparent 1.500px 5.200px)"></div>
<div class="a" style="left:182.2px;top:436px;width:17.3px;height:5px;background:#9fb3a6;"></div>
<div class="a" style="left:88.3px;top:475.5px;width:9.7px;height:7.5px;background:#2d9fc0;"></div>
<div class="a" style="left:100px;top:473.5px;width:11px;height:2.5px;background:#3aa7c4;"></div>
<div class="a" style="left:109px;top:476px;width:2px;height:5px;background:#3aa7c4;"></div>
<div class="a" style="left:98px;top:479px;width:15.4px;height:4px;background:#d8dcde;"></div>
<div class="a" style="left:88.3px;top:473.5px;width:2.2px;height:2.0px;background:#2d9fc0;"></div>
<div class="a" style="left:120.5px;top:472px;width:20.9px;height:15px;background:linear-gradient(to right,#c9c9cc,#f4f4f6,#c2c2c5);border-radius:1px"></div>
<div class="a" style="left:120px;top:470px;width:21.9px;height:2.5px;background:#d9d9dc;"></div>
<div class="a" style="left:125.5px;top:478px;width:2.0px;height:2px;background:#555;"></div>
<div class="a" style="left:134.5px;top:478px;width:2.0px;height:2px;background:#555;"></div>
<div class="a" style="left:120px;top:487px;width:21.9px;height:1.2px;background:#d0d0d2;"></div>
<div class="a" style="left:156.3px;top:466.5px;width:9.3px;height:22.0px;background:linear-gradient(to right,#d9bf94,#f2e0c0,#d2b68a);border-radius:4px"></div>
<div class="a" style="left:157.3px;top:488px;width:1.2px;height:3.3px;background:#c9b38e;"></div>
<div class="a" style="left:163.4px;top:488px;width:1.2px;height:3.3px;background:#c9b38e;"></div>
<div class="a" style="left:179px;top:472px;width:13.5px;height:9px;background:#2f9fae;border-radius:1px"></div>
<div class="a" style="left:192.5px;top:474px;width:11.1px;height:2px;background:#3aa9b6;"></div>
<div class="a" style="left:179.5px;top:481px;width:2.0px;height:4.6px;background:#2f9fae;"></div>
<div class="a" style="left:196px;top:476px;width:2px;height:9.6px;background:#2f9fae;"></div>
<div class="a" style="left:179.5px;top:483.5px;width:18.5px;height:1.5px;background:#38a5b2;"></div>
<div class="a" style="left:90px;top:497px;width:21.7px;height:23.5px;background:linear-gradient(to right,#c89a30,#ecc870,#c09028);background-image:linear-gradient(90deg,#c2922c,#e8c064 30%,#f0d080 45%,#d9ae4c 70%,#bd8c26)"></div>
<div class="a" style="left:90px;top:496px;width:21.7px;height:2px;background:#7a5a18;"></div>
<div class="a" style="left:90px;top:519.8px;width:21.7px;height:1.7px;background:#7a5a18;"></div>
<div class="a" style="left:128.1px;top:500px;width:6.0px;height:20px;background:linear-gradient(to right,#9db9cc,#d4e4ee,#93b0c4);border-radius:1px"></div>
<div class="a" style="left:129.6px;top:496px;width:3.0px;height:4.5px;background:#444;"></div>
<div class="a" style="left:128.5px;top:519.5px;width:5.2px;height:2.0px;background:#444;"></div>
<div class="a" style="left:152.8px;top:499px;width:17.2px;height:20px;background:#c9c9c6;background-image:repeating-linear-gradient(0deg,#d2d0ca 0 1.200px,#b4b2ae 1.200px 2.200px);box-shadow:inset 4px 0 3px -2px #8f8f8f,inset -4px 0 3px -2px #8f8f8f"></div>
<div class="a" style="left:152.8px;top:496px;width:17.2px;height:3.3px;background:#1d1d1d;"></div>
<div class="a" style="left:152.8px;top:518.5px;width:17.2px;height:3.0px;background:#1d1d1d;"></div>
<div class="a" style="left:179px;top:499px;width:7.5px;height:18px;background:linear-gradient(to right,#a9ceb2,#d9eedd,#9fc4a8);border-radius:2px"></div>
<div class="a" style="left:195.5px;top:499px;width:7.5px;height:18px;background:linear-gradient(to right,#a9ceb2,#d9eedd,#9fc4a8);border-radius:2px"></div>
<div class="a" style="left:186.5px;top:502px;width:9.0px;height:1.2px;background:#8fb79a;"></div>
<div class="a" style="left:186.5px;top:513px;width:9.0px;height:1.2px;background:#8fb79a;"></div>
<div class="a" style="left:190.3px;top:502px;width:1.2px;height:12px;background:#9fc4a8;"></div>
<div class="a" style="left:180px;top:517px;width:1.2px;height:2.6px;background:#8fb79a;"></div>
<div class="a" style="left:200.8px;top:517px;width:1.2px;height:2.6px;background:#8fb79a;"></div>
<div class="a" style="left:88.3px;top:531.2px;width:24.7px;height:14.8px;background:#c4e1f4;border:1px solid #d6e8f4"></div>
<div class="a" style="left:92.5px;top:534.5px;width:7.5px;height:7.5px;background:transparent;border-radius:50%;border:1px solid #eaf4fb"></div>
<div class="a" style="left:101.8px;top:534.5px;width:7.5px;height:7.5px;background:transparent;border-radius:50%;border:1px solid #eaf4fb"></div>
<div class="a" style="left:127.2px;top:526px;width:7.8px;height:13px;background:#f6f6f6;border:1px solid #d0d0d0"></div>
<div class="a" style="left:129.8px;top:539px;width:2.6px;height:13px;background:#dcdcdc;"></div>
<div class="a" style="left:129px;top:540.5px;width:4.2px;height:1.5px;background:#444;"></div>
<div class="a" style="left:129.3px;top:550.5px;width:3.7px;height:1.5px;background:#555;"></div>
<div class="a" style="left:148.8px;top:530.7px;width:24.7px;height:15.6px;background:#e9e9e9;border:1px solid #d0d0d0;background-image:repeating-linear-gradient(90deg,#e9e9e9 0 1.500px,#3c3c3c 1.500px 2.800px);background-clip:content-box;padding:1.500px 1.500px"></div>
<div class="a" style="left:148.8px;top:538px;width:24.7px;height:1px;background:#e9e9e9;"></div>
<div class="a" style="left:185px;top:526.6px;width:11.4px;height:6.9px;background:linear-gradient(to right,#b9b9bc,#f2f2f4,#b4b4b7);border-radius:2px 2px 0 0"></div>
<div class="a" style="left:188.5px;top:533.5px;width:4.5px;height:17.5px;background:linear-gradient(to right,#b9b9bc,#eeeef0,#b2b2b5);"></div>
<svg style="left:88.3px;top:558.9px;" width="25.5" height="17" viewBox="0 0 25.5 17"><path d="M0 0.500L9 3M25.400 .5L16.400 3" stroke="#c4c4c4" stroke-width="1.200"/><rect x="9.500" y="2" width="6" height="4.500" fill="#555"/><path d="M11 6.500L8.500 16.500M14 6.500l2.500 10M12.500 6.500v10" stroke="#999" stroke-width=".8"/></svg>
<div class="a" style="left:121.2px;top:561px;width:21.6px;height:14px;background:#bcdcc0;"></div>
<div class="a" style="left:122.5px;top:557.7px;width:7.5px;height:3.8px;background:#bcdcc0;"></div>
<div class="a" style="left:122.5px;top:575px;width:1.5px;height:4.6px;background:#a9c9ae;"></div>
<div class="a" style="left:140px;top:575px;width:1.5px;height:4.6px;background:#a9c9ae;"></div>
<div class="a" style="left:131px;top:575px;width:1.2px;height:4.6px;background:#a9c9ae;"></div>
<div class="a" style="left:133.5px;top:560.5px;width:2.3px;height:2.3px;background:#222;"></div>
<div class="a" style="left:138px;top:560.5px;width:2.3px;height:2.3px;background:#222;"></div>
<div class="a" style="left:121.2px;top:567.5px;width:21.6px;height:1.0px;background:#a3c8a9;"></div>
<div class="a" style="left:148px;top:565.3px;width:26.8px;height:6.9px;background:#c9e4ec;border-radius:3px;border:1px solid #d6e6d0"></div>
<div class="a" style="left:158.5px;top:567.8px;width:1.5px;height:1.5px;background:#c9a020;"></div>
<div class="a" style="left:162.5px;top:567.8px;width:1.5px;height:1.5px;background:#c9a020;"></div>
<div class="a" style="left:152px;top:566px;width:18px;height:1px;background:#cfe6c8;"></div>
<div class="a" style="left:180.8px;top:562px;width:11.7px;height:19.4px;background:#2f9daa;"></div>
<div class="a" style="left:188.5px;top:556.3px;width:3.5px;height:6.2px;background:#2f9daa;"></div>
<div class="a" style="left:194.5px;top:565.5px;width:6.7px;height:3.0px;background:#4aaab4;border-radius:1px"></div>
<div class="a" style="left:196.5px;top:568.5px;width:1.2px;height:5.5px;background:#4aaab4;"></div>
<div class="a" style="left:194px;top:574px;width:5.5px;height:5px;background:#3ba3ae;border-radius:2px"></div>
<div class="a" style="left:90.6px;top:587.8px;width:21.1px;height:22.1px;background:linear-gradient(to right,#d9d9d9,#f2f2f2,#e9e9e9);"></div>
<div class="a" style="left:90.6px;top:606.5px;width:17.4px;height:3.4px;background:#c4c8cc;"></div>
<svg style="left:90.6px;top:587.8px;" width="21" height="22" viewBox="0 0 21 22"><path d="M2 2Q11 3 12.500 19" fill="none" stroke="#fff" stroke-width="2"/><path d="M18.500 4v14" stroke="#bbb" stroke-width=".8"/></svg>
<div class="a" style="left:124.6px;top:589.5px;width:12.6px;height:21.3px;background:#b6dbbc;border:1px solid #a9cfb0"></div>
<div class="a" style="left:130.4px;top:589.5px;width:1.0px;height:21.3px;background:#a3c8a9;"></div>
<div class="a" style="left:129px;top:586.6px;width:3.8px;height:2.9px;background:#b6dbbc;"></div>
<div class="a" style="left:124.6px;top:599px;width:12.6px;height:1px;background:#a9cfb0;"></div>
<div class="a" style="left:152.3px;top:589px;width:17.6px;height:7px;background:linear-gradient(to right,#e9d6bc,#f6eadb,#e2ccb0);"></div>
<div class="a" style="left:158px;top:596px;width:6px;height:15.3px;background:linear-gradient(to right,#e4d0b6,#f4e8d8,#dcc6aa);"></div>
<div class="a" style="left:153.5px;top:585.7px;width:2.5px;height:3.3px;background:#e9d6bc;"></div>
<div class="a" style="left:157px;top:609px;width:8px;height:2.3px;background:#dcc9b0;"></div>
<div class="a" style="left:186px;top:586px;width:10px;height:25.3px;background:#cfe2f2;border:1px solid #b9d2e6"></div>
<div class="a" style="left:187.5px;top:589.5px;width:7.0px;height:8.0px;background:#3f78a6;"></div>
<div class="a" style="left:187.5px;top:601px;width:7.0px;height:8.5px;background:#4a86b4;"></div>
<svg style="left:87.8px;top:621.1px;" width="26.5" height="14.5" viewBox="0 0 26.5 14.5"><path d="M0 1.500L13 0 26.500 1.500V5H0z" fill="#b58a3c"/><path d="M0 5h26.500v4H0z" fill="#4a3a28"/><path d="M0 9h26.500v3L13 14.500 0 12z" fill="#2a2a26"/><path d="M0 10.300h26.500v1.500H0z" fill="#2f9a90"/></svg>
<div class="a" style="left:118.6px;top:618.5px;width:25.0px;height:19.9px;background:#dbe4ee;border:1px solid #c2ccd8;background-image:repeating-linear-gradient(90deg,transparent 0 3.500px,#b9c4d2 3.500px 4.200px),repeating-linear-gradient(0deg,transparent 0 3.500px,#b9c4d2 3.500px 4.200px)"></div>
<div class="a" style="left:122px;top:620px;width:18px;height:2.5px;background:#444;"></div>
<div class="a" style="left:125px;top:629px;width:4.5px;height:3.5px;background:#333;border-radius:0 0 2px 2px"></div>
<div class="a" style="left:133px;top:629px;width:4.5px;height:3.5px;background:#333;border-radius:0 0 2px 2px"></div>
<div class="a" style="left:150.6px;top:616.8px;width:21.2px;height:22.8px;background:#fff;background-image:repeating-linear-gradient(90deg,#fdfdfd 0 2.400px,#e2ddd2 2.400px 3.300px)"></div>
<div class="a" style="left:180.8px;top:615.9px;width:19.4px;height:24.2px;background:#b0b0b2;border:1px solid #c9c9cb;background-image:repeating-linear-gradient(90deg,transparent 0 5.200px,#dcdcde 5.200px 6.400px),repeating-linear-gradient(0deg,#9a9a9d 0 5.200px,#dcdcde 5.200px 6.400px)"></div>
<div class="a" style="left:94.4px;top:648px;width:13.0px;height:22.9px;background:#fbfbfb;border:1px solid #ead9c4"></div>
<div class="a" style="left:94.4px;top:659px;width:13.0px;height:11.9px;background:#ebd3b4;"></div>
<div class="a" style="left:100.4px;top:648px;width:1.0px;height:11px;background:#ead9c4;"></div>
<div class="a" style="left:97px;top:645.3px;width:7.8px;height:3.0px;background:#ecdcc6;border-radius:2px 2px 0 0"></div>
<div class="a" style="left:125.2px;top:651px;width:11.4px;height:20.2px;background:#fbf8f4;border:1px solid #eee0d0"></div>
<div class="a" style="left:125.2px;top:651px;width:11.4px;height:11px;background:#efd6b6;"></div>
<svg style="left:125.2px;top:645.8px;" width="11.4" height="5.5" viewBox="0 0 11.4 5.5"><path d="M0 5.500L5.700 0l5.700 5.500z" fill="#f2e2cc"/></svg>
<svg style="left:150.7px;top:648px;" width="21.2" height="22" viewBox="0 0 21.2 22"><path d="M0 0h6V12.500H21.200V21.800H0z" fill="#7c8092"/><path d="M7.500 2h9.500v5H7.500z" fill="#2d3140"/><path d="M9.500 .8h4V2h-4z" fill="#2d3140"/><path d="M6 14.500h15.200" stroke="#6a6e80" stroke-width="1"/></svg>
<div class="a" style="left:185px;top:646.1px;width:4.5px;height:11.4px;background:#1d1d1d;"></div>
<div class="a" style="left:191.5px;top:651.5px;width:6.5px;height:6.0px;background:#222;"></div>
<div class="a" style="left:184.3px;top:651.5px;width:6px;height:6px;background:#222;border-radius:50%;border:1px solid #eee"></div>
<div class="a" style="left:186px;top:657.5px;width:3.5px;height:10.7px;background:linear-gradient(to right,#d9d9d0,#f6f6ee,#d2d2c8);"></div>
<div class="a" style="left:192.5px;top:657.5px;width:4.0px;height:10.7px;background:linear-gradient(to right,#d9d9d0,#f6f6ee,#d2d2c8);"></div>
<div class="a" style="left:89px;top:685px;width:24px;height:3px;background:#b6bccb;"></div>
<div class="a" style="left:118px;top:677px;width:26px;height:11.3px;background:#f4f4f8;border:1.200px solid #666;border-bottom:none"></div>
<div class="a" style="left:122.1px;top:678px;width:0.8px;height:5px;background:#aab;"></div>
<div class="a" style="left:120.9px;top:682.5px;width:3.2px;height:4.5px;background:#4a5a94;border-radius:50%"></div>
<div class="a" style="left:127.4px;top:678px;width:0.8px;height:5px;background:#aab;"></div>
<div class="a" style="left:126.2px;top:682.5px;width:3.2px;height:4.5px;background:#4a5a94;border-radius:50%"></div>
<div class="a" style="left:132.7px;top:678px;width:0.8px;height:5px;background:#aab;"></div>
<div class="a" style="left:131.5px;top:682.5px;width:3.2px;height:4.5px;background:#4a5a94;border-radius:50%"></div>
<div class="a" style="left:138.0px;top:678px;width:0.8px;height:5px;background:#aab;"></div>
<div class="a" style="left:136.8px;top:682.5px;width:3.2px;height:4.5px;background:#4a5a94;border-radius:50%"></div>
<div class="a" style="left:154.9px;top:675.8px;width:12.0px;height:12.5px;background:#a9cfe0;"></div>
<div class="a" style="left:158.5px;top:682px;width:5.0px;height:3px;background:#3a7a9a;"></div>
<div class="a" style="left:178px;top:687px;width:25px;height:1.3px;background:#e4e4e4;"></div>
<!-- p_center -->
<svg style="left:221.6px;top:104px;" width="7" height="7.5" viewBox="0 0 7 7.5"><path d="M.8 0h3.700L7 2.500V6.700q0 .8-.8 .8H.8Q0 7.500 0 6.700V.8Q0 0 .8 0z" fill="#8c8c8c"/><path d="M2.300 2.600h1.200a1.300 1.300 0 0 1 0 2.600H2.300z" fill="none" stroke="#f5f5f5" stroke-width=".8"/></svg>
<div class="t" style="left:234.40px;top:104.43px;font-size:8.5px;color:#333;transform:scaleX(0.942);transform-origin:0 0;">Gráfico de área</div>
<svg style="left:295.6px;top:105px;" width="4" height="4" viewBox="0 0 4 4"><path d="M0 0l4 4M4 0l-4 4" stroke="#666" stroke-width=".7"/></svg>
<div class="a" style="left:311px;top:99.4px;width:120.6px;height:14.8px;background:#c7c7c7;"></div>
<svg style="left:319px;top:104px;" width="7.4" height="7.5" viewBox="0 0 7.4 7.5"><path d="M.8 0h3.900L7.400 2.500V6.700q0 .8-.8 .8H.8Q0 7.500 0 6.700V.8Q0 0 .8 0z" fill="#1a73e8"/><path d="M2.400 2.500h1.300a1.400 1.400 0 0 1 0 2.800H2.400z" fill="none" stroke="#fff" stroke-width=".9"/></svg>
<div class="t" style="left:332.00px;top:104.43px;font-size:8.5px;color:#2f7fe2;transform:scaleX(0.943);transform-origin:0 0;">Equipo de secado Pfc</div>
<svg style="left:416px;top:105px;" width="4" height="4" viewBox="0 0 4 4"><path d="M0 0l4 4M4 0l-4 4" stroke="#666" stroke-width=".7"/></svg>
<div class="a" style="left:213.3px;top:114.2px;width:647.2px;height:10.8px;background:#f8f8f8;"></div>
<div class="a" style="left:213.3px;top:114.2px;width:11.1px;height:10.8px;background:#e9e9e9;"></div>
<div class="a" style="left:213.3px;top:125px;width:11.1px;height:546px;background:#f8f8f8;"></div>
<div class="a" style="left:224.4px;top:125px;width:636.1px;height:546px;background:#e4e4e4;"></div>
<div class="a" style="left:224.4px;top:154.6px;width:636.1px;height:484.8px;background:#fff;box-shadow:0 0 0 .6px #cfcfcf"></div>
<svg style="left:0;top:0" width="1200" height="752" viewBox="0 0 1200 752"><defs><clipPath id="rc"><rect x="213.300" y="114.200" width="647.200" height="556.800"/></clipPath></defs><g clip-path="url(#rc)" opacity="0.999"><path d="M230.0 114.500V125" stroke="#d9d9d9" stroke-width=".7"/><path d="M241.6 121V125" stroke="#dedede" stroke-width=".7"/><text x="231.5" y="120.300" font-size="5.900" fill="#6e6e6e" font-family="Liberation Sans">20</text><path d="M253.1 114.500V125" stroke="#d9d9d9" stroke-width=".7"/><path d="M264.7 121V125" stroke="#dedede" stroke-width=".7"/><text x="254.6" y="120.300" font-size="5.900" fill="#6e6e6e" font-family="Liberation Sans">30</text><path d="M276.2 114.500V125" stroke="#d9d9d9" stroke-width=".7"/><path d="M287.8 121V125" stroke="#dedede" stroke-width=".7"/><text x="277.7" y="120.300" font-size="5.900" fill="#6e6e6e" font-family="Liberation Sans">40</text><path d="M299.3 114.500V125" stroke="#d9d9d9" stroke-width=".7"/><path d="M310.9 121V125" stroke="#dedede" stroke-width=".7"/><text x="300.8" y="120.300" font-size="5.900" fill="#6e6e6e" font-family="Liberation Sans">50</text><path d="M322.4 114.500V125" stroke="#d9d9d9" stroke-width=".7"/><path d="M334.0 121V125" stroke="#dedede" stroke-width=".7"/><text x="323.9" y="120.300" font-size="5.900" fill="#6e6e6e" font-family="Liberation Sans">60</text><path d="M345.6 114.500V125" stroke="#d9d9d9" stroke-width=".7"/><path d="M357.2 121V125" stroke="#dedede" stroke-width=".7"/><text x="347.1" y="120.300" font-size="5.900" fill="#6e6e6e" font-family="Liberation Sans">70</text><path d="M368.7 114.500V125" stroke="#d9d9d9" stroke-width=".7"/><path d="M380.3 121V125" stroke="#dedede" stroke-width=".7"/><text x="370.2" y="120.300" font-size="5.900" fill="#6e6e6e" font-family="Liberation Sans">80</text><path d="M391.8 114.500V125" stroke="#d9d9d9" stroke-width=".7"/><path d="M403.4 121V125" stroke="#dedede" stroke-width=".7"/><text x="393.3" y="120.300" font-size="5.900" fill="#6e6e6e" font-family="Liberation Sans">90</text><path d="M414.9 114.500V125" stroke="#d9d9d9" stroke-width=".7"/><path d="M426.5 121V125" stroke="#dedede" stroke-width=".7"/><text x="416.4" y="120.300" font-size="5.900" fill="#6e6e6e" font-family="Liberation Sans">100</text><path d="M438.0 114.500V125" stroke="#d9d9d9" stroke-width=".7"/><path d="M449.6 121V125" stroke="#dedede" stroke-width=".7"/><text x="439.5" y="120.300" font-size="5.900" fill="#6e6e6e" font-family="Liberation Sans">110</text><path d="M461.1 114.500V125" stroke="#d9d9d9" stroke-width=".7"/><path d="M472.7 121V125" stroke="#dedede" stroke-width=".7"/><text x="462.6" y="120.300" font-size="5.900" fill="#6e6e6e" font-family="Liberation Sans">120</text><path d="M484.2 114.500V125" stroke="#d9d9d9" stroke-width=".7"/><path d="M495.8 121V125" stroke="#dedede" stroke-width=".7"/><text x="485.7" y="120.300" font-size="5.900" fill="#6e6e6e" font-family="Liberation Sans">130</text><path d="M507.3 114.500V125" stroke="#d9d9d9" stroke-width=".7"/><path d="M518.9 121V125" stroke="#dedede" stroke-width=".7"/><text x="508.8" y="120.300" font-size="5.900" fill="#6e6e6e" font-family="Liberation Sans">140</text><path d="M530.4 114.500V125" stroke="#d9d9d9" stroke-width=".7"/><path d="M542.0 121V125" stroke="#dedede" stroke-width=".7"/><text x="531.9" y="120.300" font-size="5.900" fill="#6e6e6e" font-family="Liberation Sans">150</text><path d="M553.5 114.500V125" stroke="#d9d9d9" stroke-width=".7"/><path d="M565.1 121V125" stroke="#dedede" stroke-width=".7"/><text x="555.0" y="120.300" font-size="5.900" fill="#6e6e6e" font-family="Liberation Sans">160</text><path d="M576.6 114.500V125" stroke="#d9d9d9" stroke-width=".7"/><path d="M588.2 121V125" stroke="#dedede" stroke-width=".7"/><text x="578.1" y="120.300" font-size="5.900" fill="#6e6e6e" font-family="Liberation Sans">170</text><path d="M599.8 114.500V125" stroke="#d9d9d9" stroke-width=".7"/><path d="M611.4 121V125" stroke="#dedede" stroke-width=".7"/><text x="601.3" y="120.300" font-size="5.900" fill="#6e6e6e" font-family="Liberation Sans">180</text><path d="M622.9 114.500V125" stroke="#d9d9d9" stroke-width=".7"/><path d="M634.5 121V125" stroke="#dedede" stroke-width=".7"/><text x="624.4" y="120.300" font-size="5.900" fill="#6e6e6e" font-family="Liberation Sans">190</text><path d="M646.0 114.500V125" stroke="#d9d9d9" stroke-width=".7"/><path d="M657.6 121V125" stroke="#dedede" stroke-width=".7"/><text x="647.5" y="120.300" font-size="5.900" fill="#6e6e6e" font-family="Liberation Sans">200</text><path d="M669.1 114.500V125" stroke="#d9d9d9" stroke-width=".7"/><path d="M680.7 121V125" stroke="#dedede" stroke-width=".7"/><text x="670.6" y="120.300" font-size="5.900" fill="#6e6e6e" font-family="Liberation Sans">210</text><path d="M692.2 114.500V125" stroke="#d9d9d9" stroke-width=".7"/><path d="M703.8 121V125" stroke="#dedede" stroke-width=".7"/><text x="693.7" y="120.300" font-size="5.900" fill="#6e6e6e" font-family="Liberation Sans">220</text><path d="M715.3 114.500V125" stroke="#d9d9d9" stroke-width=".7"/><path d="M726.9 121V125" stroke="#dedede" stroke-width=".7"/><text x="716.8" y="120.300" font-size="5.900" fill="#6e6e6e" font-family="Liberation Sans">230</text><path d="M738.4 114.500V125" stroke="#d9d9d9" stroke-width=".7"/><path d="M750.0 121V125" stroke="#dedede" stroke-width=".7"/><text x="739.9" y="120.300" font-size="5.900" fill="#6e6e6e" font-family="Liberation Sans">240</text><path d="M761.5 114.500V125" stroke="#d9d9d9" stroke-width=".7"/><path d="M773.1 121V125" stroke="#dedede" stroke-width=".7"/><text x="763.0" y="120.300" font-size="5.900" fill="#6e6e6e" font-family="Liberation Sans">250</text><path d="M784.6 114.500V125" stroke="#d9d9d9" stroke-width=".7"/><path d="M796.2 121V125" stroke="#dedede" stroke-width=".7"/><text x="786.1" y="120.300" font-size="5.900" fill="#6e6e6e" font-family="Liberation Sans">260</text><path d="M807.8 114.500V125" stroke="#d9d9d9" stroke-width=".7"/><path d="M819.4 121V125" stroke="#dedede" stroke-width=".7"/><text x="809.2" y="120.300" font-size="5.900" fill="#6e6e6e" font-family="Liberation Sans">270</text><path d="M830.9 114.500V125" stroke="#d9d9d9" stroke-width=".7"/><path d="M842.5 121V125" stroke="#dedede" stroke-width=".7"/><text x="832.4" y="120.300" font-size="5.900" fill="#6e6e6e" font-family="Liberation Sans">280</text><path d="M854.0 114.500V125" stroke="#d9d9d9" stroke-width=".7"/><path d="M865.6 121V125" stroke="#dedede" stroke-width=".7"/><text x="855.5" y="120.300" font-size="5.900" fill="#6e6e6e" font-family="Liberation Sans">290</text><path d="M213.500 131.5H224.400" stroke="#d9d9d9" stroke-width=".7"/><path d="M220.500 143.1H224.400" stroke="#dedede" stroke-width=".7"/><text transform="translate(220 133.0) rotate(-90)" text-anchor="end" font-size="5.900" fill="#6e6e6e" font-family="Liberation Sans">10</text><path d="M213.500 154.6H224.400" stroke="#d9d9d9" stroke-width=".7"/><path d="M220.500 166.2H224.400" stroke="#dedede" stroke-width=".7"/><text transform="translate(220 156.1) rotate(-90)" text-anchor="end" font-size="5.900" fill="#6e6e6e" font-family="Liberation Sans">0</text><path d="M213.500 177.7H224.400" stroke="#d9d9d9" stroke-width=".7"/><path d="M220.500 189.3H224.400" stroke="#dedede" stroke-width=".7"/><text transform="translate(220 179.2) rotate(-90)" text-anchor="end" font-size="5.900" fill="#6e6e6e" font-family="Liberation Sans">10</text><path d="M213.500 200.8H224.400" stroke="#d9d9d9" stroke-width=".7"/><path d="M220.500 212.4H224.400" stroke="#dedede" stroke-width=".7"/><text transform="translate(220 202.3) rotate(-90)" text-anchor="end" font-size="5.900" fill="#6e6e6e" font-family="Liberation Sans">20</text><path d="M213.500 223.9H224.400" stroke="#d9d9d9" stroke-width=".7"/><path d="M220.500 235.5H224.400" stroke="#dedede" stroke-width=".7"/><text transform="translate(220 225.4) rotate(-90)" text-anchor="end" font-size="5.900" fill="#6e6e6e" font-family="Liberation Sans">30</text><path d="M213.500 247.0H224.400" stroke="#d9d9d9" stroke-width=".7"/><path d="M220.500 258.6H224.400" stroke="#dedede" stroke-width=".7"/><text transform="translate(220 248.5) rotate(-90)" text-anchor="end" font-size="5.900" fill="#6e6e6e" font-family="Liberation Sans">40</text><path d="M213.500 270.1H224.400" stroke="#d9d9d9" stroke-width=".7"/><path d="M220.500 281.8H224.400" stroke="#dedede" stroke-width=".7"/><text transform="translate(220 271.6) rotate(-90)" text-anchor="end" font-size="5.900" fill="#6e6e6e" font-family="Liberation Sans">50</text><path d="M213.500 293.3H224.400" stroke="#d9d9d9" stroke-width=".7"/><path d="M220.500 304.9H224.400" stroke="#dedede" stroke-width=".7"/><text transform="translate(220 294.8) rotate(-90)" text-anchor="end" font-size="5.900" fill="#6e6e6e" font-family="Liberation Sans">60</text><path d="M213.500 316.4H224.400" stroke="#d9d9d9" stroke-width=".7"/><path d="M220.500 328.0H224.400" stroke="#dedede" stroke-width=".7"/><text transform="translate(220 317.9) rotate(-90)" text-anchor="end" font-size="5.900" fill="#6e6e6e" font-family="Liberation Sans">70</text><path d="M213.500 339.5H224.400" stroke="#d9d9d9" stroke-width=".7"/><path d="M220.500 351.1H224.400" stroke="#dedede" stroke-width=".7"/><text transform="translate(220 341.0) rotate(-90)" text-anchor="end" font-size="5.900" fill="#6e6e6e" font-family="Liberation Sans">80</text><path d="M213.500 362.6H224.400" stroke="#d9d9d9" stroke-width=".7"/><path d="M220.500 374.2H224.400" stroke="#dedede" stroke-width=".7"/><text transform="translate(220 364.1) rotate(-90)" text-anchor="end" font-size="5.900" fill="#6e6e6e" font-family="Liberation Sans">90</text><path d="M213.500 385.7H224.400" stroke="#d9d9d9" stroke-width=".7"/><path d="M220.500 397.3H224.400" stroke="#dedede" stroke-width=".7"/><text transform="translate(220 387.2) rotate(-90)" text-anchor="end" font-size="5.900" fill="#6e6e6e" font-family="Liberation Sans">100</text><path d="M213.500 408.8H224.400" stroke="#d9d9d9" stroke-width=".7"/><path d="M220.500 420.4H224.400" stroke="#dedede" stroke-width=".7"/><text transform="translate(220 410.3) rotate(-90)" text-anchor="end" font-size="5.900" fill="#6e6e6e" font-family="Liberation Sans">110</text><path d="M213.500 431.9H224.400" stroke="#d9d9d9" stroke-width=".7"/><path d="M220.500 443.5H224.400" stroke="#dedede" stroke-width=".7"/><text transform="translate(220 433.4) rotate(-90)" text-anchor="end" font-size="5.900" fill="#6e6e6e" font-family="Liberation Sans">120</text><path d="M213.500 455.0H224.400" stroke="#d9d9d9" stroke-width=".7"/><path d="M220.500 466.6H224.400" stroke="#dedede" stroke-width=".7"/><text transform="translate(220 456.5) rotate(-90)" text-anchor="end" font-size="5.900" fill="#6e6e6e" font-family="Liberation Sans">130</text><path d="M213.500 478.1H224.400" stroke="#d9d9d9" stroke-width=".7"/><path d="M220.500 489.7H224.400" stroke="#dedede" stroke-width=".7"/><text transform="translate(220 479.6) rotate(-90)" text-anchor="end" font-size="5.900" fill="#6e6e6e" font-family="Liberation Sans">140</text><path d="M213.500 501.2H224.400" stroke="#d9d9d9" stroke-width=".7"/><path d="M220.500 512.9H224.400" stroke="#dedede" stroke-width=".7"/><text transform="translate(220 502.8) rotate(-90)" text-anchor="end" font-size="5.900" fill="#6e6e6e" font-family="Liberation Sans">150</text><path d="M213.500 524.4H224.400" stroke="#d9d9d9" stroke-width=".7"/><path d="M220.500 536.0H224.400" stroke="#dedede" stroke-width=".7"/><text transform="translate(220 525.9) rotate(-90)" text-anchor="end" font-size="5.900" fill="#6e6e6e" font-family="Liberation Sans">160</text><path d="M213.500 547.5H224.400" stroke="#d9d9d9" stroke-width=".7"/><path d="M220.500 559.1H224.400" stroke="#dedede" stroke-width=".7"/><text transform="translate(220 549.0) rotate(-90)" text-anchor="end" font-size="5.900" fill="#6e6e6e" font-family="Liberation Sans">170</text><path d="M213.500 570.6H224.400" stroke="#d9d9d9" stroke-width=".7"/><path d="M220.500 582.2H224.400" stroke="#dedede" stroke-width=".7"/><text transform="translate(220 572.1) rotate(-90)" text-anchor="end" font-size="5.900" fill="#6e6e6e" font-family="Liberation Sans">180</text><path d="M213.500 593.7H224.400" stroke="#d9d9d9" stroke-width=".7"/><path d="M220.500 605.3H224.400" stroke="#dedede" stroke-width=".7"/><text transform="translate(220 595.2) rotate(-90)" text-anchor="end" font-size="5.900" fill="#6e6e6e" font-family="Liberation Sans">190</text><path d="M213.500 616.8H224.400" stroke="#d9d9d9" stroke-width=".7"/><path d="M220.500 628.4H224.400" stroke="#dedede" stroke-width=".7"/><text transform="translate(220 618.3) rotate(-90)" text-anchor="end" font-size="5.900" fill="#6e6e6e" font-family="Liberation Sans">200</text><path d="M213.500 639.9H224.400" stroke="#d9d9d9" stroke-width=".7"/><path d="M220.500 651.5H224.400" stroke="#dedede" stroke-width=".7"/><text transform="translate(220 641.4) rotate(-90)" text-anchor="end" font-size="5.900" fill="#6e6e6e" font-family="Liberation Sans">210</text><path d="M213.500 663.0H224.400" stroke="#d9d9d9" stroke-width=".7"/><path d="M220.500 674.6H224.400" stroke="#dedede" stroke-width=".7"/><text transform="translate(220 664.5) rotate(-90)" text-anchor="end" font-size="5.900" fill="#6e6e6e" font-family="Liberation Sans">220</text></g></svg>
<div class="a" style="left:860.5px;top:114.2px;width:7.6px;height:574px;background:#f5f5f5;"></div>
<div class="a" style="left:861.6px;top:196.2px;width:5.2px;height:385px;background:#c4c4c4;border-radius:2.600px"></div>
<div class="a" style="left:213.3px;top:671px;width:647.2px;height:7px;background:#f5f5f5;"></div>
<div class="a" style="left:407px;top:671.8px;width:267px;height:4.8px;background:#c2c2c2;border-radius:2.400px"></div>
<svg style="left:0;top:0" width="1200" height="752" viewBox="0 0 1200 752"><defs>
<clipPath id="pc"><rect x="224.400" y="154.600" width="636.100" height="484.800"/></clipPath>
<linearGradient id="hp" x1="0" y1="0" x2="0" y2="1"><stop offset="0" stop-color="#a3c1cd"/><stop offset=".28" stop-color="#d6eaf3"/><stop offset=".62" stop-color="#a9c6d2"/><stop offset="1" stop-color="#83a1ae"/></linearGradient>
<linearGradient id="vp" x1="0" y1="0" x2="1" y2="0"><stop offset="0" stop-color="#8facba"/><stop offset=".35" stop-color="#b4d0dc"/><stop offset=".75" stop-color="#d9edf5"/><stop offset="1" stop-color="#9bb8c5"/></linearGradient>
<linearGradient id="ub" x1="0" y1="0" x2="0" y2="1"><stop offset="0" stop-color="#a6c5d1"/><stop offset=".5" stop-color="#cbe3ed"/><stop offset=".92" stop-color="#e1f1f7"/><stop offset="1" stop-color="#c3dce6"/></linearGradient>
<linearGradient id="sv" x1="0" y1="0" x2="1" y2="0"><stop offset="0" stop-color="#b0b0b0"/><stop offset=".35" stop-color="#dedede"/><stop offset=".68" stop-color="#fcfcfc"/><stop offset="1" stop-color="#cfcfcf"/></linearGradient>
<linearGradient id="tl" x1="0" y1="0" x2="1" y2="0"><stop offset="0" stop-color="#86bccd"/><stop offset=".3" stop-color="#62a7bd"/><stop offset=".58" stop-color="#579fb6"/><stop offset=".82" stop-color="#94ccdb"/><stop offset="1" stop-color="#5fa3b9"/></linearGradient>
<linearGradient id="tls" x1="0" y1="0" x2="1" y2="0"><stop offset="0" stop-color="#79b7ca"/><stop offset=".3" stop-color="#8cc6d6"/><stop offset=".7" stop-color="#62a8be"/><stop offset="1" stop-color="#4f98b0"/></linearGradient>
<linearGradient id="tlh" x1="0" y1="0" x2="0" y2="1"><stop offset="0" stop-color="#6fb2c6"/><stop offset=".35" stop-color="#7fc0d2"/><stop offset="1" stop-color="#4a90a8"/></linearGradient>
<linearGradient id="tube" x1="0" y1="0" x2="0" y2="1"><stop offset="0" stop-color="#dcdcdf"/><stop offset=".5" stop-color="#ffffff"/><stop offset="1" stop-color="#dcdcdf"/></linearGradient>
<linearGradient id="mot" x1="0" y1="0" x2="1" y2="0"><stop offset="0" stop-color="#2b2b2b"/><stop offset=".45" stop-color="#575757"/><stop offset=".8" stop-color="#3a3a3a"/><stop offset="1" stop-color="#262626"/></linearGradient>
<linearGradient id="gm" x1="0" y1="0" x2="0" y2="1"><stop offset="0" stop-color="#a9c8a5"/><stop offset=".3" stop-color="#d3e7cf"/><stop offset=".7" stop-color="#b4d1b0"/><stop offset="1" stop-color="#93b38f"/></linearGradient>
<linearGradient id="gv" x1="0" y1="0" x2="1" y2="0"><stop offset="0" stop-color="#a5c5a1"/><stop offset=".5" stop-color="#c9dfc5"/><stop offset="1" stop-color="#b3cfaf"/></linearGradient>
<linearGradient id="cy" x1="0" y1="0" x2="1" y2="0"><stop offset="0" stop-color="#d9c4ac"/><stop offset=".55" stop-color="#f5e9da"/><stop offset="1" stop-color="#decab2"/></linearGradient>
<linearGradient id="bv" x1="0" y1="0" x2="0" y2="1"><stop offset="0" stop-color="#74767e"/><stop offset=".28" stop-color="#9a9ca4"/><stop offset=".65" stop-color="#686a72"/><stop offset="1" stop-color="#4a4c53"/></linearGradient>
<linearGradient id="bv2" x1="0" y1="0" x2="0" y2="1"><stop offset="0" stop-color="#55575e"/><stop offset=".3" stop-color="#74767e"/><stop offset=".7" stop-color="#4c4e55"/><stop offset="1" stop-color="#34363c"/></linearGradient>
<linearGradient id="fm" x1="0" y1="0" x2="0" y2="1"><stop offset="0" stop-color="#b0a8a8"/><stop offset=".35" stop-color="#dcd6d6"/><stop offset="1" stop-color="#9a9292"/></linearGradient>
<linearGradient id="gf" x1="0" y1="0" x2="0" y2="1"><stop offset="0" stop-color="#a9c9a5"/><stop offset=".4" stop-color="#d6e9d2"/><stop offset="1" stop-color="#9dbd99"/></linearGradient>
<radialGradient id="ab" cx=".4" cy=".35" r=".7"><stop offset="0" stop-color="#ffffff"/><stop offset=".6" stop-color="#e2e2ea"/><stop offset="1" stop-color="#c6c6d2"/></radialGradient>
</defs><g clip-path="url(#pc)" opacity="0.999"><text x="523.5" y="198.5" font-size="17.8" text-anchor="middle" fill="#333" font-family="Liberation Sans">Drying Equipment Process Flow</text><text x="524" y="219.5" font-size="17.8" text-anchor="middle" fill="#333" font-family="Liberation Sans">Diagram</text><path d="M372.300 306V329.500Q372.300 335 366.800 335H321" fill="none" stroke="#e2e2e5" stroke-width="6.2" stroke-linejoin="round"/><path d="M372.300 306V329.500Q372.300 335 366.800 335H321" fill="none" stroke="#ececee" stroke-width="4.800000000000001" stroke-linejoin="round"/><path d="M372.300 306V329.500Q372.300 335 366.800 335H321" fill="none" stroke="#f7f7f8" stroke-width="3.4000000000000004" stroke-linejoin="round"/><path d="M372.300 306V329.500Q372.300 335 366.800 335H321" fill="none" stroke="#ffffff" stroke-width="2.2" stroke-linejoin="round"/><path d="M337.100 335V373.300Q337.100 378.800 331.600 378.800H312.800Q307.300 378.800 307.300 384.300V473.500Q307.300 479 312.800 479H322" fill="none" stroke="#e2e2e5" stroke-width="6.2" stroke-linejoin="round"/><path d="M337.100 335V373.300Q337.100 378.800 331.600 378.800H312.800Q307.300 378.800 307.300 384.300V473.500Q307.300 479 312.800 479H322" fill="none" stroke="#ececee" stroke-width="4.800000000000001" stroke-linejoin="round"/><path d="M337.100 335V373.300Q337.100 378.800 331.600 378.800H312.800Q307.300 378.800 307.300 384.300V473.500Q307.300 479 312.800 479H322" fill="none" stroke="#f7f7f8" stroke-width="3.4000000000000004" stroke-linejoin="round"/><path d="M337.100 335V373.300Q337.100 378.800 331.600 378.800H312.800Q307.300 378.800 307.300 384.300V473.500Q307.300 479 312.800 479H322" fill="none" stroke="#ffffff" stroke-width="2.2" stroke-linejoin="round"/><path d="M307.300 445.700H345" fill="none" stroke="#e2e2e5" stroke-width="6.2" stroke-linejoin="round"/><path d="M307.300 445.700H345" fill="none" stroke="#ececee" stroke-width="4.800000000000001" stroke-linejoin="round"/><path d="M307.300 445.700H345" fill="none" stroke="#f7f7f8" stroke-width="3.4000000000000004" stroke-linejoin="round"/><path d="M307.300 445.700H345" fill="none" stroke="#ffffff" stroke-width="2.2" stroke-linejoin="round"/><path d="M474 320.300H468Q456.800 320.300 456.800 309V280Q456.800 268.800 468 268.800H727.200Q738.400 268.800 738.400 280V352" fill="none" stroke="#dedee3" stroke-width="10.8"/><path d="M474 320.300H468Q456.800 320.300 456.800 309V280Q456.800 268.800 468 268.800H727.200Q738.400 268.800 738.400 280V352" fill="none" stroke="#e4e4e8" stroke-width="9.2"/><path d="M474 320.300H468Q456.800 320.300 456.800 309V280Q456.800 268.800 468 268.800H727.200Q738.400 268.800 738.400 280V352" fill="none" stroke="#ececef" stroke-width="7.4"/><path d="M474 320.300H468Q456.800 320.300 456.800 309V280Q456.800 268.800 468 268.800H727.200Q738.400 268.800 738.400 280V352" fill="none" stroke="#f5f5f7" stroke-width="5.6"/><path d="M474 320.300H468Q456.800 320.300 456.800 309V280Q456.800 268.800 468 268.800H727.200Q738.400 268.800 738.400 280V352" fill="none" stroke="#ffffff" stroke-width="3.6"/><path d="M269.800 313.200h4.100v36.600h-4.100zM317.100 313.200h4.500v36.600h-4.500z" fill="#5d6580"/><rect x="273.900" y="324.900" width="43.200" height="19.400" fill="#555a72"/><rect x="273.900" y="324.900" width="43.200" height="1.500" fill="#6c7390"/><path d="M295.700 232.300L307.800 239.200H300.900V274H290.500V239.200H283.100z" fill="url(#tls)"/><path d="M300.900 273.400L316.500 289V316.300L308.200 324.900H283.100L273.900 316.300V289L290.500 273.400z" fill="url(#tl)"/><path d="M273.900 289H316.500" stroke="#9fd0de" stroke-width=".8"/><path d="M273.900 316.300H316.500" stroke="#86c0d0" stroke-width=".7"/><path d="M316.800 289h7.800v1.300L385.100 294.100 399.800 290.600V290.300H405.800V308.800H399.800V308.500L385.100 304.900 324.600 308.800V309.700H316.800z" fill="url(#tlh)"/><path d="M320.500 289v20.700M324.600 289v20.700M399.800 290.300v18.500" stroke="#8cc6d6" stroke-width=".7"/><rect x="252" y="368.500" width="5" height="22.500" fill="#2e2e2e"/><path d="M256 364.200Q256 358.200 262 358.200H274.500Q280.500 358.200 280.500 364.200V397H256z" fill="url(#mot)"/><rect x="256" y="392.500" width="24.500" height="4.500" fill="#1f1f1f" opacity=".6"/><path d="M260.500 367V393M264 367V393M267.500 367V393M271 367V393M274.500 367V393M277.500 367V393" stroke="#1c1c1c" stroke-width=".6" opacity=".55"/><rect x="256.500" y="361.500" width="23.500" height="4" fill="#6a6a6a" opacity=".45"/><rect x="259.400" y="397" width="18.500" height="6" fill="#d3941c"/><rect x="254.600" y="401.500" width="27.600" height="23.200" fill="#f0a928"/><rect x="254.600" y="422.500" width="27.600" height="2.200" fill="#f6c45e"/><circle cx="264.600" cy="411.700" r="6" fill="#f5c060"/><circle cx="264.600" cy="411.700" r="4.800" fill="#fff"/><circle cx="264.600" cy="411.700" r="3.600" fill="#c4d8ea"/><rect x="282.200" y="407" width="13.500" height="9" fill="#e3a228"/><rect x="282.200" y="408.500" width="13.500" height="2.500" fill="#f4c25a"/><rect x="295.700" y="407.800" width="8.100" height="7.400" fill="#c4c4c8"/><rect x="295.700" y="409.300" width="8.100" height="2.200" fill="#f4f4f6"/><rect x="364.500" y="351.200" width="323" height="17.300" fill="url(#hp)"/><rect x="363.1" y="349.600" width="2.800" height="21" rx="1" fill="url(#hp)" stroke="#9dbac6" stroke-width=".4"/><rect x="497.9" y="349.600" width="2.800" height="21" rx="1" fill="url(#hp)" stroke="#9dbac6" stroke-width=".4"/><rect x="627.4" y="349.600" width="2.800" height="21" rx="1" fill="url(#hp)" stroke="#9dbac6" stroke-width=".4"/><rect x="685.3" y="349.600" width="2.800" height="21" rx="1" fill="url(#hp)" stroke="#9dbac6" stroke-width=".4"/><rect x="688" y="353.700" width="21.500" height="13.800" fill="url(#hp)"/><rect x="709.300" y="352.600" width="15.300" height="14.900" fill="#b3d2de"/><path d="M384.4 382.600V370.500Q384.4 364.200 390.4 364.200H397.4Q403.4 364.200 403.4 370.500V382.600z" fill="url(#vp)"/><rect x="381.5" y="376.300" width="3.600" height="1.800" rx=".8" fill="#8ca6b2"/><rect x="402.7" y="376.300" width="3.600" height="1.800" rx=".8" fill="#8ca6b2"/><rect x="384.4" y="376.600" width="19" height="1" fill="#9dbac6" opacity=".6"/><path d="M453.8 382.600V370.500Q453.8 364.200 459.8 364.200H466.8Q472.8 364.200 472.8 370.500V382.600z" fill="url(#vp)"/><rect x="450.90000000000003" y="376.300" width="3.600" height="1.800" rx=".8" fill="#8ca6b2"/><rect x="472.1" y="376.300" width="3.600" height="1.800" rx=".8" fill="#8ca6b2"/><rect x="453.8" y="376.600" width="19" height="1" fill="#9dbac6" opacity=".6"/><path d="M523.2 382.600V370.500Q523.2 364.200 529.2 364.200H536.2Q542.2 364.200 542.2 370.500V382.600z" fill="url(#vp)"/><rect x="520.3000000000001" y="376.300" width="3.600" height="1.800" rx=".8" fill="#8ca6b2"/><rect x="541.5" y="376.300" width="3.600" height="1.800" rx=".8" fill="#8ca6b2"/><rect x="523.2" y="376.600" width="19" height="1" fill="#9dbac6" opacity=".6"/><path d="M592.6 382.600V370.500Q592.6 364.200 598.6 364.200H605.6Q611.6 364.200 611.6 370.500V382.600z" fill="url(#vp)"/><rect x="589.7" y="376.300" width="3.600" height="1.800" rx=".8" fill="#8ca6b2"/><rect x="610.9" y="376.300" width="3.600" height="1.800" rx=".8" fill="#8ca6b2"/><rect x="592.6" y="376.600" width="19" height="1" fill="#9dbac6" opacity=".6"/><rect x="343.200" y="417" width="299.600" height="80" fill="#9db5bd"/><rect x="640" y="479" width="22.600" height="18" fill="#9db5bd"/><rect x="343.200" y="417" width="2.800" height="80" fill="#bfdbe4"/><rect x="640.400" y="417" width="2.400" height="51.500" fill="#c3dfe8"/><rect x="660.200" y="479" width="2.400" height="18" fill="#c3dfe8"/><rect x="343.200" y="382.600" width="299.600" height="32" fill="url(#ub)"/><rect x="343.200" y="414" width="299.600" height="3.200" fill="#87a5b1"/><rect x="343.200" y="380.500" width="2.400" height="34" fill="#a4cfdc"/><rect x="640.400" y="380.500" width="2.400" height="34" fill="#bfe0ea"/><rect x="345" y="442.200" width="281.700" height="7.400" fill="url(#tube)"/><rect x="345" y="444" width="281.700" height="3.600" fill="#fff"/><rect x="345.500" y="476.600" width="281.200" height="7.200" fill="url(#tube)"/><rect x="345.500" y="478.300" width="281.200" height="3.600" fill="#fff"/><path d="M393.8 449.600h4.800v5.500q0 3.200-2.400 3.200t-2.400-3.200z" fill="#cfe4ec"/><rect x="392.6" y="452.500" width="3" height="1.500" fill="#8faab6"/><path d="M429.6 449.600h4.800v5.500q0 3.200-2.400 3.200t-2.400-3.200z" fill="#cfe4ec"/><rect x="428.3" y="452.500" width="3" height="1.500" fill="#8faab6"/><path d="M465.3 449.600h4.800v5.500q0 3.200-2.400 3.200t-2.400-3.200z" fill="#cfe4ec"/><rect x="464.1" y="452.500" width="3" height="1.500" fill="#8faab6"/><path d="M501.1 449.600h4.800v5.500q0 3.200-2.400 3.200t-2.400-3.200z" fill="#cfe4ec"/><rect x="499.8" y="452.500" width="3" height="1.500" fill="#8faab6"/><path d="M536.8 449.600h4.800v5.500q0 3.200-2.400 3.200t-2.400-3.200z" fill="#cfe4ec"/><rect x="535.6" y="452.500" width="3" height="1.500" fill="#8faab6"/><path d="M572.6 449.600h4.800v5.500q0 3.200-2.400 3.200t-2.400-3.200z" fill="#cfe4ec"/><rect x="571.4" y="452.500" width="3" height="1.500" fill="#8faab6"/><path d="M608.3 449.600h4.800v5.500q0 3.200-2.400 3.200t-2.400-3.200z" fill="#cfe4ec"/><rect x="607.1" y="452.500" width="3" height="1.500" fill="#8faab6"/><rect x="376.8" y="473.200" width="2.400" height="20" fill="#c6dee8"/><rect x="412.5" y="473.200" width="2.400" height="20" fill="#c6dee8"/><rect x="448.2" y="473.200" width="2.400" height="20" fill="#c6dee8"/><rect x="483.9" y="473.200" width="2.400" height="20" fill="#c6dee8"/><rect x="519.6" y="473.200" width="2.400" height="20" fill="#c6dee8"/><rect x="555.3" y="473.200" width="2.400" height="20" fill="#c6dee8"/><rect x="591.0" y="473.200" width="2.400" height="20" fill="#c6dee8"/><rect x="626.7" y="473.200" width="2.400" height="20" fill="#c6dee8"/><path d="M321.500 474.100L345.700 470.100V497.400L335.700 516.400H321.500z" fill="#a9c9d9"/><rect x="318.900" y="516.400" width="16.800" height="2.600" fill="#b9d5e2"/><rect x="345.100" y="571" width="331.600" height="16.200" fill="url(#hp)"/><rect x="343.900" y="568.300" width="2.900" height="21.200" rx="1" fill="url(#hp)" stroke="#9dbac6" stroke-width=".4"/><rect x="675.300" y="568.300" width="2.500" height="21.400" rx="1" fill="url(#hp)" stroke="#9dbac6" stroke-width=".4"/><path d="M677.800 571L686.700 574.200V583L677.800 587.200z" fill="url(#hp)"/><rect x="343.100" y="497" width="2.800" height="31.500" fill="#5b8d9b"/><rect x="345.7" y="496.600" width="31.200" height="31.200" fill="url(#sv)"/><rect x="354.6" y="527.700" width="15.600" height="6" fill="#f1f3f5"/><path d="M354.6 533.700h15.600V567.500q0 7-7.800 7t-7.800-7z" fill="url(#vp)"/><rect x="352.3" y="532.200" width="20.200" height="1.700" rx=".8" fill="#a9bfc9"/><rect x="352.3" y="560.600" width="20.200" height="1.700" rx=".8" fill="#a3bbc6"/><rect x="377.1" y="496.600" width="31.200" height="31.200" fill="url(#sv)"/><rect x="386.0" y="527.700" width="15.600" height="6" fill="#f1f3f5"/><path d="M386.0 533.700h15.600V567.500q0 7-7.800 7t-7.800-7z" fill="url(#vp)"/><rect x="383.7" y="532.200" width="20.200" height="1.700" rx=".8" fill="#a9bfc9"/><rect x="383.7" y="560.600" width="20.200" height="1.700" rx=".8" fill="#a3bbc6"/><rect x="408.4" y="496.600" width="31.200" height="31.200" fill="url(#sv)"/><rect x="417.3" y="527.700" width="15.600" height="6" fill="#f1f3f5"/><path d="M417.3 533.700h15.600V567.500q0 7-7.800 7t-7.800-7z" fill="url(#vp)"/><rect x="415.0" y="532.200" width="20.200" height="1.700" rx=".8" fill="#a9bfc9"/><rect x="415.0" y="560.600" width="20.200" height="1.700" rx=".8" fill="#a3bbc6"/><rect x="439.8" y="496.600" width="31.200" height="31.200" fill="url(#sv)"/><rect x="448.7" y="527.700" width="15.600" height="6" fill="#f1f3f5"/><path d="M448.7 533.700h15.600V567.500q0 7-7.800 7t-7.800-7z" fill="url(#vp)"/><rect x="446.4" y="532.200" width="20.200" height="1.700" rx=".8" fill="#a9bfc9"/><rect x="446.4" y="560.600" width="20.200" height="1.700" rx=".8" fill="#a3bbc6"/><rect x="471.1" y="496.600" width="31.200" height="31.200" fill="url(#sv)"/><rect x="480.0" y="527.700" width="15.600" height="6" fill="#f1f3f5"/><path d="M480.0 533.700h15.600V567.500q0 7-7.800 7t-7.800-7z" fill="url(#vp)"/><rect x="477.7" y="532.200" width="20.200" height="1.700" rx=".8" fill="#a9bfc9"/><rect x="477.7" y="560.600" width="20.200" height="1.700" rx=".8" fill="#a3bbc6"/><rect x="502.4" y="496.600" width="31.200" height="31.200" fill="url(#sv)"/><rect x="511.4" y="527.700" width="15.600" height="6" fill="#f1f3f5"/><path d="M511.4 533.700h15.600V567.500q0 7-7.800 7t-7.800-7z" fill="url(#vp)"/><rect x="509.1" y="532.200" width="20.200" height="1.700" rx=".8" fill="#a9bfc9"/><rect x="509.1" y="560.600" width="20.200" height="1.700" rx=".8" fill="#a3bbc6"/><rect x="533.8" y="496.600" width="31.200" height="31.200" fill="url(#sv)"/><rect x="542.7" y="527.700" width="15.600" height="6" fill="#f1f3f5"/><path d="M542.7 533.700h15.600V567.500q0 7-7.800 7t-7.800-7z" fill="url(#vp)"/><rect x="540.4" y="532.200" width="20.200" height="1.700" rx=".8" fill="#a9bfc9"/><rect x="540.4" y="560.600" width="20.200" height="1.700" rx=".8" fill="#a3bbc6"/><rect x="565.1" y="496.600" width="31.200" height="31.200" fill="url(#sv)"/><rect x="574.1" y="527.700" width="15.600" height="6" fill="#f1f3f5"/><path d="M574.1 533.700h15.600V567.500q0 7-7.800 7t-7.800-7z" fill="url(#vp)"/><rect x="571.8" y="532.200" width="20.200" height="1.700" rx=".8" fill="#a9bfc9"/><rect x="571.8" y="560.600" width="20.200" height="1.700" rx=".8" fill="#a3bbc6"/><rect x="596.5" y="496.600" width="31.200" height="31.200" fill="url(#sv)"/><rect x="605.4" y="527.700" width="15.600" height="6" fill="#f1f3f5"/><path d="M605.4 533.700h15.600V567.500q0 7-7.800 7t-7.800-7z" fill="url(#vp)"/><rect x="603.1" y="532.200" width="20.200" height="1.700" rx=".8" fill="#a9bfc9"/><rect x="603.1" y="560.600" width="20.200" height="1.700" rx=".8" fill="#a3bbc6"/><rect x="627.9" y="496.600" width="31.200" height="31.200" fill="url(#sv)"/><rect x="636.8" y="527.700" width="15.600" height="6" fill="#f1f3f5"/><path d="M636.8 533.700h15.600V567.500q0 7-7.800 7t-7.800-7z" fill="url(#vp)"/><rect x="634.5" y="532.200" width="20.200" height="1.700" rx=".8" fill="#a9bfc9"/><rect x="634.5" y="560.600" width="20.200" height="1.700" rx=".8" fill="#a3bbc6"/><rect x="466.800" y="334.500" width="86.800" height="12.100" fill="#b7d3b3"/><rect x="466.800" y="334.500" width="86.800" height="1.200" fill="#a3c19f"/><rect x="472.500" y="284.400" width="17.300" height="50.100" fill="url(#gv)"/><rect x="472.500" y="284.400" width="17.300" height="1.600" fill="#9dbd99"/><rect x="489.800" y="306" width="3" height="9" fill="#dfe8dd"/><path d="M498.800 287H517.800L515.300 294.800H501.300z" fill="#a9c9a5"/><path d="M491.900 298q0-3.600 3.600-3.600H543.200q6 0 6 6V322.500q0 6-6 6H495.500q-3.600 0-3.600-3.600z" fill="url(#gm)"/><path d="M500 301H534M500 305.500H534M500 310H534M500 314.500H534M500 319H534M500 323.500H534" stroke="#a1c19d" stroke-width=".9" opacity=".8"/><path d="M534.700 294.400V328.500" stroke="#9dbd99" stroke-width="1"/><path d="M498.500 294.400V328.500" stroke="#a3c39f" stroke-width=".8"/><rect x="500.500" y="323.300" width="32.800" height="11.200" fill="#b4d1b0"/><path d="M724.400 351.500H752.900V382L743.800 419.300V426H733V419.300L724.400 382z" fill="url(#cy)"/><path d="M724.400 378.600H752.900" stroke="#d6c0a6" stroke-width=".8"/><path d="M724.400 382H752.900" stroke="#e2d0ba" stroke-width=".6"/><rect x="733" y="419.300" width="10.800" height="34" fill="url(#cy)"/><rect x="727.300" y="426" width="23.300" height="20.400" fill="#eddcc6"/><path d="M707.700 452.700H743.800L735.300 467.900H719z" fill="#e9d4b9"/><rect x="639.900" y="468.300" width="100.300" height="10.500" fill="#b2d1dd"/><rect x="740.200" y="472" width="6.500" height="4" fill="#d0d0d4"/><rect x="751" y="460.600" width="7.300" height="3.500" fill="#b4adad"/><rect x="746.600" y="463.800" width="29.800" height="20.300" rx="2" fill="url(#fm)"/><path d="M752.500 463.800V484.100M768 463.800V484.100" stroke="#8a8282" stroke-width=".7"/><rect x="674.900" y="412.500" width="12.900" height="8.500" fill="#4a4c52"/><path d="M662.500 428q0-7.600 7.600-7.600H700V450.900H670.100q-7.600 0-7.600-7.600z" fill="url(#bv)"/><path d="M698 421Q708 420.500 716 418.600V452Q708 450.800 698 450.500z" fill="url(#bv2)"/><path d="M698 421V450.500M704 420V451" stroke="#2e3036" stroke-width=".8"/><path d="M676 421V451M680 421V451M684 421V451M688 421V451M692 421V451" stroke="#3c3e44" stroke-width=".5" opacity=".6"/><rect x="702.500" y="434" width="3" height="3.600" rx=".8" fill="#dfe6ee"/><circle cx="668.500" cy="436" r=".9" fill="#aaa"/><rect x="716" y="432.300" width="11.300" height="5.400" fill="#cda562"/><rect x="716" y="433.300" width="11.300" height="1.800" fill="#e9cf9c"/><rect x="686.700" y="574.200" width="6.600" height="8.500" fill="#a9c9a5"/><rect x="728" y="574.200" width="4" height="8.800" fill="#a9c9a5"/><path d="M693.300 574.200L703 563.700H718.300L728 574.200V582.500L718.300 594.700H703L693.300 582.500z" fill="url(#gf)"/><path d="M703 563.700V594.700M707 563.700V594.700M711 563.700V594.700M715 563.700V594.700M718.300 563.700V594.700" stroke="#a5c5a1" stroke-width=".8" opacity=".8"/><path d="M736.300 574.200H753.300V581.700H736.300z" fill="#dcdce4"/><rect x="736.300" y="574.200" width="10.400" height="7.500" fill="#ececf2" stroke="#d0d0da" stroke-width=".5"/><circle cx="753.300" cy="589.700" r="14.700" fill="url(#ab)"/><circle cx="753.300" cy="589.700" r="10.200" fill="#ededf3" stroke="#d2d2dc" stroke-width=".6"/><circle cx="753.300" cy="589.700" r="6.300" fill="#59616e"/><path d="M749 586.800h8.600M747.600 589.700h11.400M749 592.600h8.600M750.400 584.300v10.800M753.300 583.600v12.200M756.200 584.300v10.800" stroke="#c4c8d0" stroke-width=".8"/><text x="245" y="292" font-size="8" text-anchor="middle" fill="#444" font-family="Liberation Sans">Dedusting by</text><text x="245" y="301.8" font-size="8" text-anchor="middle" fill="#444" font-family="Liberation Sans">Water</text><text x="245" y="311.6" font-size="8" text-anchor="middle" fill="#444" font-family="Liberation Sans">Curtain</text><text x="410.6" y="327.3" font-size="8" text-anchor="middle" fill="#444" font-family="Liberation Sans">Water</text><text x="410.6" y="336.7" font-size="8" text-anchor="middle" fill="#444" font-family="Liberation Sans">Pump</text><text x="588" y="327.8" font-size="8" text-anchor="middle" fill="#444" font-family="Liberation Sans">Draught Fan</text><text x="264.3" y="441.7" font-size="8" text-anchor="middle" fill="#444" font-family="Liberation Sans">Plunger</text><text x="264.3" y="451.4" font-size="8" text-anchor="middle" fill="#444" font-family="Liberation Sans">Pump</text><text x="288.2" y="479.8" font-size="8" text-anchor="middle" fill="#444" font-family="Liberation Sans">Valve</text><text x="328.2" y="532.7" font-size="8" text-anchor="middle" fill="#444" font-family="Liberation Sans">Outlet</text><text x="688" y="404.1" font-size="8" text-anchor="middle" fill="#444" font-family="Liberation Sans">Blocking Valve</text><text x="790" y="404" font-size="8" text-anchor="middle" fill="#444" font-family="Liberation Sans">Cyclone Separator</text><text x="808" y="479.2" font-size="8" text-anchor="middle" fill="#444" font-family="Liberation Sans">Spiral Feeder</text><text x="789.7" y="592.8" font-size="8" text-anchor="middle" fill="#444" font-family="Liberation Sans">Air Blower</text></g></svg>
<!-- p_right -->
<div class="a" style="left:868px;top:99px;width:1px;height:589px;background:#e9e9e9;"></div>
<div class="a" style="left:888.5px;top:99px;width:1px;height:589px;background:#e9e9e9;"></div>
<svg style="left:874.6px;top:105.2px;" width="7.5" height="7" viewBox="0 0 7.5 7"><path d="M.5 .3L3.300 3.500 .5 6.700M4.200 .3L7 3.500 4.200 6.700" fill="none" stroke="#777" stroke-width=".9"/></svg>
<div class="a" style="left:868.4px;top:118.6px;width:20.2px;height:20.3px;background:#0d6fe8;"></div>
<svg style="left:873px;top:123px;" width="11" height="11" viewBox="0 0 11 11"><path d="M5 1L9.300 5.500 5 10 .8 5.500z" fill="none" stroke="#fff" stroke-width="1.200" stroke-linejoin="round"/><path d="M1.500 6.200h7L5 9.800z" fill="#fff"/><circle cx="10" cy="8.800" r=".9" fill="#fff"/></svg>
<svg style="left:873px;top:150.5px;" width="10" height="10.2" viewBox="0 0 10 10.2"><rect x=".6" y=".6" width="3.600" height="3.600" rx=".6" fill="none" stroke="#2b2b2b" stroke-width="1.1"/><rect x="5.800" y=".6" width="3.600" height="3.600" rx=".6" fill="none" stroke="#2b2b2b" stroke-width="1.1"/><rect x=".6" y="6" width="3.600" height="3.600" rx=".6" fill="none" stroke="#2b2b2b" stroke-width="1.1"/><rect x="5.800" y="6" width="3.600" height="3.600" rx=".6" fill="none" stroke="#2b2b2b" stroke-width="1.1"/></svg>
<svg style="left:873.5px;top:178.4px;" width="10.2" height="8.6" viewBox="0 0 10.2 8.6"><rect x=".7" y=".7" width="8.800" height="7.200" rx=".6" fill="none" stroke="#2b2b2b" stroke-width="1.3"/><path d="M1.500 7L4 4.200 5.800 6 7.300 4.800 9 7z" fill="#2b2b2b"/></svg>
<svg style="left:873px;top:204.9px;" width="11" height="10.7" viewBox="0 0 11 10.7"><path d="M5.500 .7L10.300 3.600 5.500 6.500 .7 3.600z" fill="none" stroke="#2b2b2b" stroke-width="1.2" stroke-linejoin="round"/><path d="M.7 6.300L5.500 9.400 10.300 6.300" fill="none" stroke="#2b2b2b" stroke-width="1.2" stroke-linejoin="round"/></svg>
<svg style="left:873.8px;top:231.7px;" width="8.7" height="10.3" viewBox="0 0 8.7 10.3"><path d="M.7 1.500Q.7 .7 1.500 .7H5.500L8 3.200V8.800q0 .8-.8 .8H1.500Q.7 9.600 .7 8.800z" fill="none" stroke="#2b2b2b" stroke-width="1.3"/><path d="M2.500 5h3.700M2.500 7.200h3.700" fill="none" stroke="#2b2b2b" stroke-width="1"/></svg>
<svg style="left:873px;top:259px;" width="10.4" height="10" viewBox="0 0 10.4 10"><path d="M.7 0V9.300H10.400" fill="none" stroke="#2b2b2b" stroke-width="1.2"/><path d="M2.200 7.200L4.800 2.800 6.800 6 8.800 7" fill="none" stroke="#2b2b2b" stroke-width="1"/></svg>
<svg style="left:873.5px;top:285.5px;" width="9.5" height="9.5" viewBox="0 0 9.5 9.5"><rect x=".7" y=".7" width="8.100" height="8.100" rx=".6" fill="none" stroke="#2b2b2b" stroke-width="1.3"/><path d="M.7 3.400h8.100M.7 6.100h8.100M3.500 3.400v5.400M6.200 3.400v5.400" fill="none" stroke="#2b2b2b" stroke-width="1"/></svg>
<svg style="left:873.5px;top:312.6px;" width="9.5" height="9.2" viewBox="0 0 9.5 9.2"><path d="M.7 8.500V2.200H4V.7H8.800V8.500z" fill="none" stroke="#2b2b2b" stroke-width="1.3"/><path d="M2.300 4.500h1.200M2.300 6.500h1.200M5.800 3h1.400M5.800 5.200h1.400M5.800 7.400h1.400" fill="none" stroke="#2b2b2b" stroke-width="1"/></svg>
<svg style="left:873.5px;top:339px;" width="10" height="10.5" viewBox="0 0 10 10.5"><path d="M0 1h10M2 4.500h8M7.500 4.500V9h-3" fill="none" stroke="#2b2b2b" stroke-width="1.3"/></svg>
<svg style="left:873px;top:366.8px;" width="10.5" height="9.2" viewBox="0 0 10.5 9.2"><path d="M.5 1.500h2L7.500 7.700h2.500M.5 7.700h2L7.500 1.500h2.500" fill="none" stroke="#2b2b2b" stroke-width="1.2"/><path d="M8.300 0L10.200 1.500 8.300 3M8.300 6.200L10.200 7.700 8.300 9.200" fill="none" stroke="#2b2b2b" stroke-width="1"/><circle cx="1" cy="1.500" r=".9" fill="#2b2b2b"/><circle cx="1" cy="7.700" r=".9" fill="#2b2b2b"/></svg>
<div class="a" style="left:946.7px;top:99.3px;width:115px;height:19.1px;background:#dedede;border-radius:0 0 0 3px"></div>
<div class="t" style="left:904.30px;top:106.43px;font-size:8.5px;color:#111;font-weight:bold;transform:scaleX(0.902);transform-origin:0 0;">Relleno</div>
<div class="t" style="left:966.40px;top:106.43px;font-size:8.5px;color:#333;transform:scaleX(0.846);transform-origin:0 0;">Línea</div>
<div class="t" style="left:1018.80px;top:106.43px;font-size:8.5px;color:#333;transform:scaleX(0.944);transform-origin:0 0;">Sombra</div>
<div class="a" style="left:1061.7px;top:99px;width:1.3px;height:589px;background:#f0f0f0;"></div>
<div class="a" style="left:904.5px;top:133.8px;width:2px;height:2px;background:#a9a9a9;border-radius:50%"></div>
<div class="t" style="left:911.50px;top:131.13px;font-size:8.3px;color:#9c9c9c;transform:scaleX(0.936);transform-origin:0 0;">Sin relleno</div>
<div class="a" style="left:903.2px;top:155.1px;width:4.6px;height:4.6px;background:#fdfdfd;border-radius:50%;border:.5px solid #ececec"></div>
<div class="t" style="left:911.50px;top:153.73px;font-size:8.3px;color:#9c9c9c;transform:scaleX(0.965);transform-origin:0 0;">Relleno sólido</div>
<div class="a" style="left:903.2px;top:177.7px;width:4.6px;height:4.6px;background:#fdfdfd;border-radius:50%;border:.5px solid #ececec"></div>
<div class="t" style="left:911.50px;top:176.33px;font-size:8.3px;color:#9c9c9c;transform:scaleX(0.982);transform-origin:0 0;">Relleno degradado</div>
<div class="a" style="left:903.2px;top:200.3px;width:4.6px;height:4.6px;background:#fdfdfd;border-radius:50%;border:.5px solid #ececec"></div>
<div class="t" style="left:911.50px;top:198.93px;font-size:8.3px;color:#9c9c9c;transform:scaleX(0.987);transform-origin:0 0;">Relleno sólido y degradado</div>
<div class="a" style="left:903.2px;top:222.9px;width:4.6px;height:4.6px;background:#fdfdfd;border-radius:50%;border:.5px solid #ececec"></div>
<div class="t" style="left:911.50px;top:221.53px;font-size:8.3px;color:#9c9c9c;transform:scaleX(0.962);transform-origin:0 0;">Relleno de trama</div>
<div class="a" style="left:903.2px;top:245.5px;width:4.6px;height:4.6px;background:#fdfdfd;border-radius:50%;border:.5px solid #ececec"></div>
<div class="t" style="left:911.50px;top:244.13px;font-size:8.3px;color:#9c9c9c;transform:scaleX(0.968);transform-origin:0 0;">Relleno con imagen o textura</div>
<!-- p_bottom -->
<div class="a" style="left:84px;top:688px;width:979px;height:0.8px;background:#e4e4e4;"></div>
<svg style="left:97px;top:695.2px;" width="13.7" height="7.3" viewBox="0 0 13.7 7.3"><path d="M.5 0v7.300M13.200 0v7.300" stroke="#555" stroke-width=".9"/><rect x="3.100" y=".6" width="7.500" height="6.100" rx=".6" fill="none" stroke="#2b2b2b" stroke-width="1.100"/></svg>
<div class="t" style="left:126.00px;top:695.53px;font-size:8.3px;color:#444;transform:scaleX(0.918);transform-origin:0 0;">Página-1</div>
<svg style="left:182.2px;top:697.4px;" width="3.4" height="2" viewBox="0 0 3.4 2"><path d="M0 0h3.400L1.700 2z" fill="#555"/></svg>
<div class="a" style="left:189.8px;top:690px;width:1px;height:19px;background:#e2e2e2;"></div>
<div class="t" style="left:197.50px;top:695.53px;font-size:8.3px;color:#111;font-weight:bold;transform:scaleX(0.939);transform-origin:0 0;">Página-1</div>
<svg style="left:242.5px;top:695.7px;" width="6" height="6" viewBox="0 0 6 6"><path d="M3 0v6M0 3h6" stroke="#333" stroke-width="1"/></svg>
<svg style="left:220px;top:679.6px;" width="7.5" height="7.5" viewBox="0 0 7.5 7.5"><path d="M3.300 .6L6 3.400 3.300 6.200 .6 3.400z" fill="none" stroke="#2b2b2b" stroke-width=".9" stroke-linejoin="round"/><path d="M1.100 3.900h4.400L3.300 6z" fill="#2b2b2b"/><circle cx="6.800" cy="6" r=".6" fill="#2b2b2b"/></svg>
<svg style="left:0;top:0" width="1200" height="752" viewBox="0 0 1200 752"><rect x="233.20" y="678.800" width="6.500" height="8.400" fill="#c0000c"/><rect x="240.17" y="678.800" width="6.500" height="8.400" fill="#e0101c"/><rect x="247.14" y="678.800" width="6.500" height="8.400" fill="#c84878"/><rect x="254.11" y="678.800" width="6.500" height="8.400" fill="#e45060"/><rect x="261.08" y="678.800" width="6.500" height="8.400" fill="#e86c70"/><rect x="268.05" y="678.800" width="6.500" height="8.400" fill="#dc68a8"/><rect x="275.02" y="678.800" width="6.500" height="8.400" fill="#ec98c0"/><rect x="281.99" y="678.800" width="6.500" height="8.400" fill="#f08c8c"/><rect x="288.96" y="678.800" width="6.500" height="8.400" fill="#f490b0"/><rect x="295.93" y="678.800" width="6.500" height="8.400" fill="#fca080"/><rect x="302.90" y="678.800" width="6.500" height="8.400" fill="#f4a890"/><rect x="309.87" y="678.800" width="6.500" height="8.400" fill="#fcb8c0"/><rect x="316.84" y="678.800" width="6.500" height="8.400" fill="#ecd8ec"/><rect x="323.81" y="678.800" width="6.500" height="8.400" fill="#fcd8e8"/><rect x="330.78" y="678.800" width="6.500" height="8.400" fill="#fce4ec"/><rect x="339.20" y="678.800" width="6.500" height="8.400" fill="#142850"/><rect x="346.17" y="678.800" width="6.500" height="8.400" fill="#203c78"/><rect x="353.14" y="678.800" width="6.500" height="8.400" fill="#4c2c84"/><rect x="360.11" y="678.800" width="6.500" height="8.400" fill="#0c4c94"/><rect x="367.08" y="678.800" width="6.500" height="8.400" fill="#0c64a8"/><rect x="374.05" y="678.800" width="6.500" height="8.400" fill="#4060b0"/><rect x="381.02" y="678.800" width="6.500" height="8.400" fill="#5c80cc"/><rect x="387.99" y="678.800" width="6.500" height="8.400" fill="#0878cc"/><rect x="394.96" y="678.800" width="6.500" height="8.400" fill="#0c88d0"/><rect x="401.93" y="678.800" width="6.500" height="8.400" fill="#2c9cdc"/><rect x="408.90" y="678.800" width="6.500" height="8.400" fill="#10acf0"/><rect x="415.87" y="678.800" width="6.500" height="8.400" fill="#34b8ec"/><rect x="422.84" y="678.800" width="6.500" height="8.400" fill="#90b8e8"/><rect x="429.81" y="678.800" width="6.500" height="8.400" fill="#a4d0f0"/><rect x="436.78" y="678.800" width="6.500" height="8.400" fill="#d4e8fc"/><rect x="444.80" y="678.800" width="6.500" height="8.400" fill="#0c3c30"/><rect x="451.77" y="678.800" width="6.500" height="8.400" fill="#0c5c3c"/><rect x="458.74" y="678.800" width="6.500" height="8.400" fill="#0c5c5c"/><rect x="465.71" y="678.800" width="6.500" height="8.400" fill="#5c6c2c"/><rect x="472.68" y="678.800" width="6.500" height="8.400" fill="#0c7848"/><rect x="479.65" y="678.800" width="6.500" height="8.400" fill="#1c9848"/><rect x="486.62" y="678.800" width="6.500" height="8.400" fill="#10a4a0"/><rect x="493.59" y="678.800" width="6.500" height="8.400" fill="#50b4c8"/><rect x="500.56" y="678.800" width="6.500" height="8.400" fill="#28c4b4"/><rect x="507.53" y="678.800" width="6.500" height="8.400" fill="#3cb88c"/><rect x="514.50" y="678.800" width="6.500" height="8.400" fill="#10a85c"/><rect x="521.47" y="678.800" width="6.500" height="8.400" fill="#7cb820"/><rect x="528.44" y="678.800" width="6.500" height="8.400" fill="#a8d060"/><rect x="535.41" y="678.800" width="6.500" height="8.400" fill="#c0d848"/><rect x="542.38" y="678.800" width="6.500" height="8.400" fill="#d8ecd8"/><rect x="550.80" y="678.800" width="6.500" height="8.400" fill="#e0501c"/><rect x="557.77" y="678.800" width="6.500" height="8.400" fill="#ec6c0c"/><rect x="564.74" y="678.800" width="6.500" height="8.400" fill="#f08010"/><rect x="571.71" y="678.800" width="6.500" height="8.400" fill="#f09848"/><rect x="578.68" y="678.800" width="6.500" height="8.400" fill="#eca010"/><rect x="585.65" y="678.800" width="6.500" height="8.400" fill="#fcb010"/><rect x="592.62" y="678.800" width="6.500" height="8.400" fill="#f0b430"/><rect x="599.59" y="678.800" width="6.500" height="8.400" fill="#f4c030"/><rect x="606.56" y="678.800" width="6.500" height="8.400" fill="#fcc810"/><rect x="613.53" y="678.800" width="6.500" height="8.400" fill="#fce010"/><rect x="620.50" y="678.800" width="6.500" height="8.400" fill="#fcf080"/><rect x="627.47" y="678.800" width="6.500" height="8.400" fill="#f8d878"/><rect x="634.44" y="678.800" width="6.500" height="8.400" fill="#f0d090"/><rect x="641.41" y="678.800" width="6.500" height="8.400" fill="#f8e0b0"/><rect x="648.38" y="678.800" width="6.500" height="8.400" fill="#fcf0e0"/><rect x="656.30" y="678.800" width="6.500" height="8.400" fill="#6c2878"/><rect x="663.27" y="678.800" width="6.500" height="8.400" fill="#7c3088"/><rect x="670.24" y="678.800" width="6.500" height="8.400" fill="#6838a0"/><rect x="677.21" y="678.800" width="6.500" height="8.400" fill="#6c4ca0"/><rect x="684.18" y="678.800" width="6.500" height="8.400" fill="#8850a0"/><rect x="691.15" y="678.800" width="6.500" height="8.400" fill="#8c4c8c"/><rect x="698.12" y="678.800" width="6.500" height="8.400" fill="#c070b8"/><rect x="705.09" y="678.800" width="6.500" height="8.400" fill="#a890d8"/><rect x="712.06" y="678.800" width="6.500" height="8.400" fill="#c0a8d0"/><rect x="719.03" y="678.800" width="6.500" height="8.400" fill="#ecc8e8"/><rect x="726.80" y="678.800" width="6.500" height="8.400" fill="#5c2818"/><rect x="733.77" y="678.800" width="6.500" height="8.400" fill="#7c3c20"/><rect x="740.74" y="678.800" width="6.500" height="8.400" fill="#8c4c20"/><rect x="747.71" y="678.800" width="6.500" height="8.400" fill="#a85820"/><rect x="754.68" y="678.800" width="6.500" height="8.400" fill="#b87830"/><rect x="761.65" y="678.800" width="6.500" height="8.400" fill="#c08860"/><rect x="768.62" y="678.800" width="6.500" height="8.400" fill="#e0b078"/><rect x="775.59" y="678.800" width="6.500" height="8.400" fill="#d4d0cc"/><rect x="782.56" y="678.800" width="6.500" height="8.400" fill="#d0d4d4"/><rect x="790.10" y="678.800" width="6.500" height="8.400" fill="#000000"/><rect x="797.07" y="678.800" width="6.500" height="8.400" fill="#303030"/><rect x="804.04" y="678.800" width="6.500" height="8.400" fill="#505050"/><rect x="811.01" y="678.800" width="6.500" height="8.400" fill="#6c6c6c"/><rect x="817.98" y="678.800" width="6.500" height="8.400" fill="#808080"/><rect x="824.95" y="678.800" width="6.500" height="8.400" fill="#9c9c9c"/><rect x="831.92" y="678.800" width="6.500" height="8.400" fill="#b4b4b4"/><rect x="838.89" y="678.800" width="6.500" height="8.400" fill="#cccccc"/><rect x="845.86" y="678.800" width="6.500" height="8.400" fill="#e0e0e0"/><rect x="852.83" y="678.800" width="6.500" height="8.400" fill="#f0f0f0"/><rect x="860.400" y="678.800" width="6" height="8.400" fill="#ffffff"/></svg>
<svg style="left:886px;top:693.5px;" width="10" height="10" viewBox="0 0 10 10"><circle cx="5" cy="5" r="4.300" fill="none" stroke="#2b2b2b" stroke-width="1.100"/><path d="M3.900 2.900L7.200 5 3.900 7.100z" fill="#2b2b2b"/></svg>
<div class="a" style="left:902.5px;top:698px;width:6.5px;height:1.2px;background:#333;"></div>
<div class="a" style="left:913.5px;top:698.2px;width:49px;height:1px;background:#cfcfcf;"></div>
<div class="a" style="left:913.5px;top:698.2px;width:13px;height:1px;background:#9a9a9a;"></div>
<div class="a" style="left:923.5px;top:695.5px;width:6px;height:6px;background:#fff;border-radius:50%;border:1px solid #666"></div>
<svg style="left:967.5px;top:695.5px;" width="6" height="6" viewBox="0 0 6 6"><path d="M3 0v6M0 3h6" stroke="#333" stroke-width="1.200"/></svg>
<div class="t" style="left:983.50px;top:695.58px;font-size:7.8px;color:#333;transform:scaleX(0.827);transform-origin:0 0;">100%</div>
<svg style="left:1005px;top:697.7px;" width="3" height="1.8" viewBox="0 0 3 1.8"><path d="M0 0h3L1.500 1.800z" fill="#999"/></svg>
<svg style="left:1020px;top:694px;" width="9" height="9" viewBox="0 0 9 9"><path d="M0 2.800V.6h2.400M6.600 .6H9v2.200M9 6.200V8.400H6.600M2.400 8.400H0V6.200" fill="none" stroke="#2b2b2b" stroke-width="1.200"/></svg>
<svg style="left:1034px;top:693.5px;" width="10" height="10" viewBox="0 0 10 10"><rect x=".6" y=".6" width="8.800" height="8.800" rx=".8" fill="none" stroke="#2b2b2b" stroke-width="1.200"/><path d="M2.600 5h4.800" stroke="#2b2b2b" stroke-width="1"/><path d="M3.800 3.600L2.300 5 3.800 6.400zM6.200 3.600L7.700 5 6.200 6.400z" fill="#2b2b2b"/></svg>
</body></html>
